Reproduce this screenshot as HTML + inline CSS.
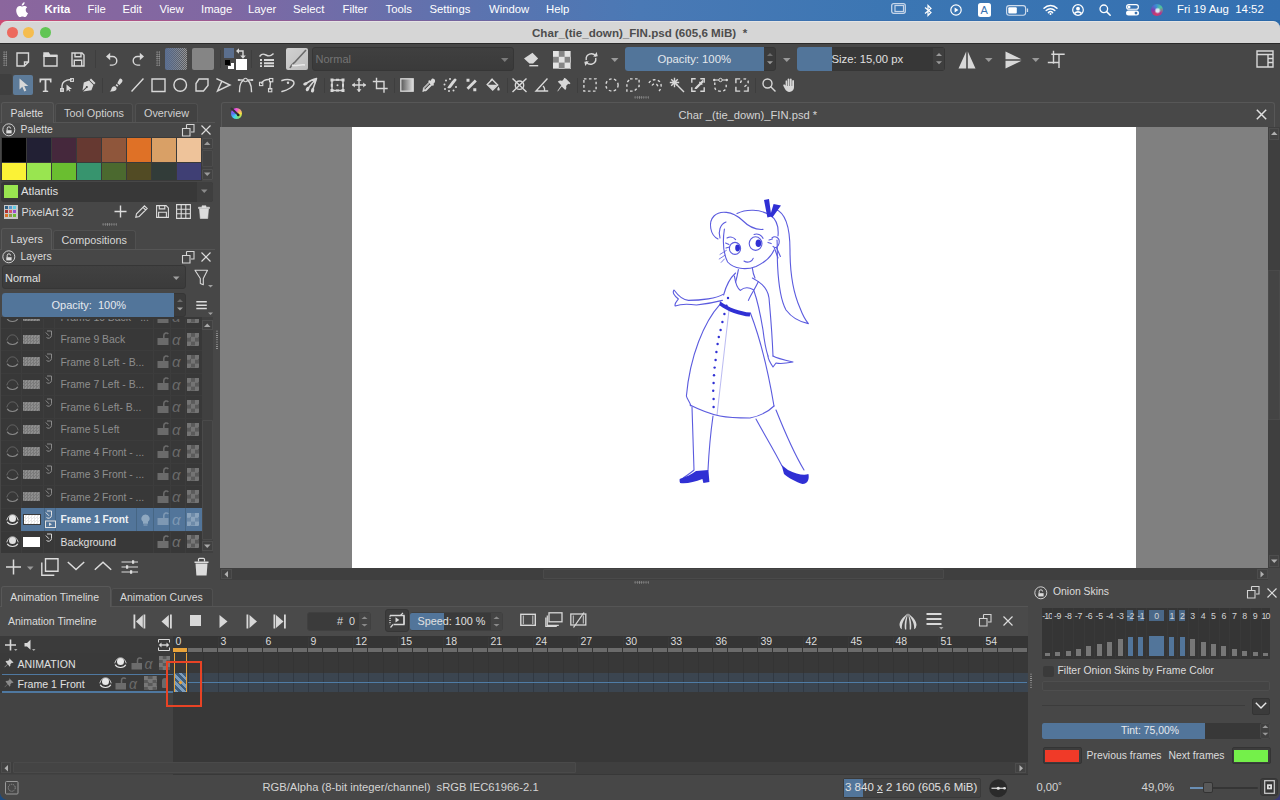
<!DOCTYPE html>
<html><head><meta charset="utf-8">
<style>
*{margin:0;padding:0;box-sizing:border-box}
html,body{width:1280px;height:800px;overflow:hidden;background:#474747;font-family:"Liberation Sans",sans-serif;color:#e6e6e6}
.a{position:absolute}
svg.i{position:absolute;overflow:visible}
.t{position:absolute;white-space:nowrap;font-size:11px;line-height:1}
.ic{fill:none;stroke:#d8d8d8;stroke-width:1.4;stroke-linecap:square}
.fi{fill:#d8d8d8;stroke:none}
.dots{position:absolute;background-image:radial-gradient(circle,#9c9c9c 0.65px,transparent 0.85px);background-size:2.2px 2.2px}
.sep{position:absolute;width:1px;background:#3e3e3e}
</style></head><body>
<!-- MENU BAR -->
<div class="a" style="left:0;top:0;width:1280px;height:20px;background:linear-gradient(90deg,#8b669d 0%,#7f68a3 18%,#5f72ae 35%,#4a79b5 50%,#3b76b3 70%,#3470b1 100%)"></div>
<div class="a" style="left:0;top:20px;width:1280px;height:10px;background:linear-gradient(90deg,#cc4a72,#a05a90 15%,#3d72b0 60%,#2a68a8)"></div>
<svg class="i" style="left:16px;top:2px" width="12" height="15" viewBox="0 0 12 15"><path fill="#fff" d="M9.7 7.9c0-1.7 1.4-2.5 1.5-2.6-.8-1.2-2.1-1.3-2.5-1.4-1-.1-2.1.6-2.6.6-.6 0-1.4-.6-2.3-.6C2.6 4 1.4 4.7.8 5.9c-1.3 2.2-.3 5.5.9 7.3.6.9 1.3 1.8 2.3 1.8.9 0 1.3-.6 2.4-.6s1.4.6 2.4.6 1.6-.9 2.2-1.8c.7-1 1-2 1-2.1-.1 0-2.3-.8-2.3-3.2zM7.9 2.6c.5-.6.8-1.4.7-2.3-.7 0-1.6.5-2.1 1.1-.5.5-.9 1.4-.8 2.2.8.1 1.7-.4 2.2-1z"/></svg>
<div class="t" style="left:44.5px;top:4px;font-size:11.3px;font-weight:bold;color:#fff">Krita</div>
<div class="t" style="left:87.5px;top:4px;font-size:11.3px;color:#fff">File</div>
<div class="t" style="left:122.5px;top:4px;font-size:11.3px;color:#fff">Edit</div>
<div class="t" style="left:159.5px;top:4px;font-size:11.3px;color:#fff">View</div>
<div class="t" style="left:201px;top:4px;font-size:11.3px;color:#fff">Image</div>
<div class="t" style="left:248px;top:4px;font-size:11.3px;color:#fff">Layer</div>
<div class="t" style="left:293px;top:4px;font-size:11.3px;color:#fff">Select</div>
<div class="t" style="left:342.5px;top:4px;font-size:11.3px;color:#fff">Filter</div>
<div class="t" style="left:385.5px;top:4px;font-size:11.3px;color:#fff">Tools</div>
<div class="t" style="left:429.5px;top:4px;font-size:11.3px;color:#fff">Settings</div>
<div class="t" style="left:489px;top:4px;font-size:11.3px;color:#fff">Window</div>
<div class="t" style="left:546px;top:4px;font-size:11.3px;color:#fff">Help</div>
<div class="t" style="left:1177px;top:4px;font-size:11.4px;color:#fff">Fri 19 Aug&nbsp;&nbsp;14:52</div>
<!-- status icons -->
<svg class="i" style="left:891px;top:3px" width="15" height="11"><rect x="0.7" y="0.7" width="13.6" height="9.6" rx="2" fill="none" stroke="#e8eef6" stroke-width="1.3" opacity=".8"/><rect x="4" y="2.5" width="8.5" height="6" fill="none" stroke="#e8eef6" stroke-width="1.2" opacity=".8"/></svg>
<svg class="i" style="left:924px;top:4px" width="8" height="13"><path d="M1 3.5l6 5-3 3V1.5l3 3-6 5" fill="none" stroke="#fff" stroke-width="1.2"/></svg>
<svg class="i" style="left:949.5px;top:4px" width="12" height="12"><circle cx="6" cy="6" r="5.2" fill="none" stroke="#fff" stroke-width="1.2"/><path d="M4.6 3.6v4.8l3.8-2.4z" fill="#fff"/></svg>
<div class="a" style="left:977.5px;top:3px;width:13.5px;height:14px;background:#fff;border-radius:2.5px"></div>
<div class="t" style="left:980.5px;top:5px;font-size:11px;color:#3a72b0">A</div>
<svg class="i" style="left:1006px;top:5px" width="23" height="11"><rect x="0.6" y="0.6" width="19" height="9.6" rx="2.5" fill="none" stroke="#cfdcec" stroke-width="1.1"/><rect x="2.3" y="2.3" width="8.5" height="6.2" rx="1" fill="#fff"/><rect x="20.8" y="3.5" width="1.3" height="3.5" fill="#cfdcec"/></svg>
<svg class="i" style="left:1043px;top:4px" width="15" height="11"><path d="M1 4.2a9 9 0 0 1 13 0M3.2 6.5a6 6 0 0 1 8.6 0M5.4 8.6a3 3 0 0 1 4.2 0" fill="none" stroke="#fff" stroke-width="1.5" stroke-linecap="round"/><circle cx="7.5" cy="10" r="1" fill="#fff"/></svg>
<svg class="i" style="left:1072px;top:4px" width="12" height="12"><circle cx="6" cy="6" r="5.3" fill="none" stroke="#fff" stroke-width="1.2"/><circle cx="6" cy="4.7" r="1.9" fill="#fff"/><path d="M2.6 9.4c1.8-2 5-2 6.8 0" fill="none" stroke="#fff" stroke-width="1.6"/></svg>
<svg class="i" style="left:1099px;top:4px" width="12" height="12"><circle cx="4.8" cy="4.8" r="3.8" fill="none" stroke="#fff" stroke-width="1.3"/><path d="M7.6 7.6l3.6 3.6" stroke="#fff" stroke-width="1.5" stroke-linecap="round"/></svg>
<svg class="i" style="left:1125.5px;top:4px" width="13" height="12"><rect x="0.6" y="0.6" width="11.8" height="4.6" rx="2.3" fill="none" stroke="#fff" stroke-width="1.1"/><circle cx="3" cy="2.9" r="1.5" fill="#fff"/><rect x="0" y="6.6" width="13" height="5" rx="2.5" fill="#fff"/><circle cx="10" cy="9.1" r="1.4" fill="#3a72b0"/></svg>
<div class="a" style="left:1151px;top:4px;width:12px;height:12px;border-radius:50%;background:radial-gradient(circle at 55% 55%,#d8e6f5 0 15%,transparent 35%),conic-gradient(from 200deg,#d03a6a,#7a3fb0,#3b8ad8,#4fc79a,#b03a8a,#d03a6a)"></div>

<!-- TITLE BAR -->
<div class="a" style="left:0;top:21px;width:1280px;height:23px;background:#d6d6d6;border-radius:7px 7px 0 0;border-top:1px solid #e4e4e4;border-bottom:1px solid #2a2a2a"></div>
<div class="a" style="left:6.5px;top:27px;width:11px;height:11px;border-radius:50%;background:#ed6a5e"></div>
<div class="a" style="left:23px;top:27px;width:11px;height:11px;border-radius:50%;background:#f5bd4f"></div>
<div class="a" style="left:39.5px;top:27px;width:11px;height:11px;border-radius:50%;background:#61c554"></div>
<div class="t" style="left:532px;top:26.5px;font-size:11.6px;font-weight:bold;color:#4d4d4d">Char_(tie_down)_FIN.psd (605,6 MiB)&nbsp;&nbsp;*</div>
<!-- TOOLBAR -->
<div class="a" style="left:0;top:44px;width:1280px;height:54px;background:#474747"></div>
<div class="dots" style="left:3px;top:51px;width:4.4px;height:15.4px"></div>
<svg class="i" style="left:16px;top:52px" width="14" height="15"><path class="ic" d="M1 1h11.5v9L8.5 14H1z M12.5 10H8.5v4"/></svg>
<svg class="i" style="left:43px;top:52px" width="15" height="15"><path class="ic" d="M1 3.5h13V14H1z"/><path class="fi" d="M0.3 0.3h5.5l1.5 2.5h6.9v2.2H0.3z"/></svg>
<svg class="i" style="left:71px;top:52px" width="14" height="15"><path class="ic" d="M1 1h10l2 2v11H1z M3.3 14V8.2h7.4V14 M4 1v3.8h6V1"/></svg>
<div class="sep" style="left:95px;top:50px;height:18px"></div>
<svg class="i" style="left:106px;top:52px" width="12" height="15"><path class="ic" d="M3 4.5h3.5a4.3 4.3 0 0 1 0 8.6H4.5" stroke-width="1.5" stroke-linecap="butt"/><path class="fi" d="M0 4.5L4.2 0.8v7.4z"/></svg>
<svg class="i" style="left:132px;top:52px" width="12" height="15"><path class="ic" d="M9 4.5H5.5a4.3 4.3 0 0 0 0 8.6h2" stroke-width="1.5" stroke-linecap="butt"/><path class="fi" d="M12 4.5L7.8 0.8v7.4z"/></svg>
<div class="dots" style="left:156px;top:51px;width:4.4px;height:15.4px"></div>
<div class="a" style="left:165px;top:48px;width:22px;height:22px;border-radius:2px;background:linear-gradient(90deg,rgba(90,110,145,1),rgba(90,110,145,0)),repeating-conic-gradient(#9a9a9a 0 25%,#5a5a5a 0 50%) 0 0/2px 2px"></div>
<div class="a" style="left:192px;top:48px;width:22px;height:22px;border-radius:2px;background:#858585"></div>
<div class="sep" style="left:220px;top:50px;height:18px"></div>
<div class="a" style="left:224px;top:48px;width:10px;height:10px;background:#5b6f8e"></div>
<svg class="i" style="left:236px;top:48px" width="11" height="11"><path class="ic" d="M2.5 3h4.5v4.5" stroke-width="1.3" stroke-linecap="butt"/><path class="fi" d="M0 3l3-2.8v5.6z M7 10.8L4.2 7.5h5.6z"/></svg>
<div class="a" style="left:228px;top:63px;width:6px;height:6px;background:#fff"></div>
<div class="a" style="left:224px;top:59px;width:7px;height:7px;background:#000;border:1px solid #474747"></div>
<div class="a" style="left:236px;top:59px;width:11px;height:11px;background:#fff"></div>
<div class="sep" style="left:251px;top:50px;height:18px"></div>
<svg class="i" style="left:259px;top:51px" width="16" height="16"><path class="ic" d="M1 5c2-3 4-2 6-1s4 2 7-1" stroke-width="1.7" stroke-linecap="round"/><path class="fi" d="M1 8h2v2H1z M5 8h10v2H5z M1 11.3h2v2H1z M5 11.3h10v2H5z M1 14.3h2v1.7H1z M5 14.3h10v1.7H5z"/></svg>
<div class="a" style="left:286px;top:48px;width:22px;height:22px;border-radius:2px;background:linear-gradient(135deg,#d2d2d2,#bcbcbc)"></div>
<svg class="i" style="left:286px;top:48px" width="22" height="22"><path d="M20 2L9 14c-2 2-4 3-5 6" fill="none" stroke="#6a6a6a" stroke-width="1.6"/><path d="M6 17c4 2 8-1 13 0" fill="none" stroke="#e8e8e8" stroke-width="1.5"/></svg>
<div class="a" style="left:312px;top:47px;width:202px;height:24px;border-radius:3px;background:linear-gradient(#404040,#3a3a3a);border:1px solid #363636"></div>
<div class="t" style="left:315.5px;top:54px;font-size:11px;color:#747474">Normal</div>
<svg class="i" style="left:501px;top:58px" width="8" height="5"><path d="M0 0h7.5L3.75 4z" fill="#7a7a7a"/></svg>
<svg class="i" style="left:523px;top:52px" width="16" height="15"><path class="fi" d="M9.5 0.8l5.6 5.6-5 5H6.4L1 6.4z"/><path class="ic" d="M7 13.7h7.5" stroke-width="1.2" stroke-linecap="butt"/></svg>
<div class="a" style="left:553px;top:51px;width:17.5px;height:17.5px;background:repeating-conic-gradient(#868686 0 25%,#e4e4e4 0 50%) 0 0/11.6px 11.6px"></div>
<svg class="i" style="left:583px;top:51px" width="16" height="16"><path class="ic" d="M3.2 8.5A5.2 5.2 0 0 1 12.5 4.8 M12.8 7.5A5.2 5.2 0 0 1 3.5 11.2" stroke-width="1.5" stroke-linecap="butt"/><path class="fi" d="M10.2 5.8l4.5-0.5-1-4.3z M5.8 10.2l-4.5 0.5 1 4.3z"/></svg>
<svg class="i" style="left:611px;top:58px" width="8" height="5"><path d="M0 0h7.5L3.75 4z" fill="#9a9a9a"/></svg>
<div class="a" style="left:625px;top:47px;width:151px;height:24px;border-radius:3px;background:#3b3b3b;border:1px solid #363636"></div>
<div class="a" style="left:625px;top:47px;width:139px;height:24px;border-radius:3px 0 0 3px;background:#52759a"></div>
<div class="t" style="left:657.5px;top:54px;font-size:11.3px;color:#e4e8ec">Opacity: 100%</div>
<svg class="i" style="left:767px;top:52px" width="7" height="14"><path d="M0 4h6L3 1z" fill="#6e6e6e"/><path d="M0 9.3h6L3 12.3z" fill="#9a9a9a"/></svg>
<svg class="i" style="left:783px;top:58px" width="8" height="5"><path d="M0 0h7.5L3.75 4z" fill="#9a9a9a"/></svg>
<div class="a" style="left:797px;top:47px;width:148px;height:24px;border-radius:3px;background:#373737;border:1px solid #363636"></div>
<div class="a" style="left:797px;top:47px;width:35px;height:24px;border-radius:3px 0 0 3px;background:#52759a"></div>
<div class="a" style="left:933px;top:48px;width:11px;height:22px;background:#3f3f3f"></div>
<div class="t" style="left:831.5px;top:54px;font-size:11.3px;color:#e0e0e0">Size: 15,00 px</div>
<svg class="i" style="left:936px;top:52px" width="7" height="14"><path d="M0 4h6L3 1z" fill="#9a9a9a"/><path d="M0 9.3h6L3 12.3z" fill="#9a9a9a"/></svg>
<svg class="i" style="left:958px;top:51px" width="18" height="18"><path class="fi" d="M8.2 0.5v17H0.5z M9.8 0.5v17h7.7z"/></svg>
<svg class="i" style="left:985px;top:58px" width="8" height="5"><path d="M0 0h7.5L3.75 4z" fill="#9a9a9a"/></svg>
<svg class="i" style="left:1005px;top:51px" width="17" height="18"><path class="fi" d="M0.5 0.5l16 7.7H0.5z M0.5 9.8h16l-16 7.7z"/></svg>
<svg class="i" style="left:1032px;top:58px" width="8" height="5"><path d="M0 0h7.5L3.75 4z" fill="#9a9a9a"/></svg>
<svg class="i" style="left:1048px;top:51px" width="17" height="17"><path class="ic" d="M5.5 0.5v11.5M0.5 11.5h10M4 3.3h12M11 3.3v13" stroke-width="1.5" stroke-linecap="butt"/></svg>
<svg class="i" style="left:1256px;top:50px" width="18" height="18"><path class="ic" d="M1 1h16v16H1z M1 4.5h16 M12 4.5v12.5 M12 8.5h5 M12 12.5h5" stroke-width="1.1" stroke-linecap="butt"/></svg>

<!-- ROW 2 tools -->
<div class="a" style="left:0;top:74px;width:12px;height:21px;background:#3f3f3f;border-radius:0 2px 2px 0"></div>
<div class="a" style="left:13px;top:75px;width:20px;height:20px;background:#5d7b99;border-radius:2px"></div>
<svg class="i" style="left:19px;top:78px" width="10" height="14"><path class="fi" d="M0.5 0.5v11l2.8-2.8 2 4.8 2-0.9-2-4.6h4z"/></svg>
<svg class="i" style="left:39px;top:78px" width="13" height="14"><path class="fi" d="M0.5 0.5h12v4h-1.3l-0.6-2.3H7.4v10.2l1.8.4v1.2H3.8v-1.2l1.8-.4V2.2H2.4L1.8 4.5H0.5z"/></svg>
<svg class="i" style="left:60px;top:78px" width="14" height="14"><path class="ic" d="M2 12.5V8c0-4 3-6 9-6.5" stroke-width="1.3"/><rect x="0.6" y="10.6" width="2.8" height="2.8" fill="none" stroke="#d8d8d8" stroke-width="1.1"/><rect x="10.6" y="0.6" width="2.8" height="2.8" fill="none" stroke="#d8d8d8" stroke-width="1.1"/><path class="fi" d="M6.5 6.5v7l1.8-1.8 1.2 1.8 1-0.6-1.2-1.8h2.7z"/></svg>
<svg class="i" style="left:82px;top:78px" width="14" height="14"><path class="fi" d="M9 0.5l4.5 4.5-1.4 1.4L7.6 1.9z M7 2.6l4.4 4.4-2 5.2L1 13.5l3.6-3.6a1 1 0 1 0-.7-.7L0.5 12.6 1.8 4.6z"/></svg>
<div class="sep" style="left:102px;top:78px;height:15px"></div>
<svg class="i" style="left:109px;top:78px" width="14" height="14"><path class="fi" d="M11.2 0.5c1.2 0 2.3 1 2.3 2.3 0 1-1 2-3 4.2L8.3 5.2C10 2 10.5 0.5 11.2 0.5z M7.6 6l1.8 1.6-1 1.2-1.8-1.6z M5.3 8.3c1.2-.1 2.3 1 2.3 2.3 0 2-2.6 3.2-6.9 2.9 2-1 1.4-2.8 2.5-4.2.5-.6 1.3-1 2.1-1z"/></svg>
<svg class="i" style="left:131px;top:78px" width="13" height="14"><path class="ic" d="M1 13L12 1" stroke-width="1.6"/></svg>
<svg class="i" style="left:151px;top:78px" width="15" height="14"><path class="ic" d="M1 1h13v12.5H1z" stroke-width="1.6"/></svg>
<svg class="i" style="left:173px;top:78px" width="15" height="14"><ellipse cx="7.2" cy="7" rx="6.3" ry="6.3" class="ic" stroke-width="1.6"/></svg>
<svg class="i" style="left:195px;top:78px" width="14" height="14"><path class="ic" d="M4 1h9v6.5L8.5 13H1V5.5z" stroke-width="1.6"/></svg>
<svg class="i" style="left:216px;top:78px" width="15" height="14"><path class="ic" d="M1 1l13 6-12.5 6L5.5 4" stroke-width="1.6" stroke-linecap="round"/></svg>
<svg class="i" style="left:238px;top:78px" width="15" height="14"><path class="ic" d="M1.5 13.5c0-9 2.5-11.5 6-11.5s6 2.5 6 11.5" stroke-width="1.6"/><path class="ic" d="M0.5 2h14" stroke-width="1.2"/><circle cx="7.5" cy="2" r="1.8" fill="#474747" stroke="#d8d8d8" stroke-width="1.1"/><circle cx="1" cy="2" r="1" class="fi"/><circle cx="14" cy="2" r="1" class="fi"/></svg>
<svg class="i" style="left:259px;top:78px" width="15" height="14"><path class="ic" d="M2.5 5c2-3 5-3.5 7-3.5M11.5 3.8C11 8 11 10 11 11" stroke-width="1.6"/><rect x="0.5" y="4.3" width="3.3" height="3.3" fill="none" stroke="#d8d8d8" stroke-width="1.1"/><rect x="10.5" y="0.5" width="3.3" height="3.3" fill="none" stroke="#d8d8d8" stroke-width="1.1"/><rect x="9.5" y="10.5" width="3.3" height="3.3" fill="none" stroke="#d8d8d8" stroke-width="1.1"/></svg>
<svg class="i" style="left:281px;top:78px" width="14" height="14"><path class="ic" d="M1 2.5c4-1.5 12-1.5 12 2.5 0 3.5-6 7-12 8.5" stroke-width="1.6" stroke-linecap="round"/><circle cx="7" cy="4.8" r="1.2" class="fi"/></svg>
<svg class="i" style="left:303px;top:78px" width="15" height="15"><path d="M13.5 0.5C10 1.5 6 3 3 5.5 M13.5 0.5C11 3 8 6.5 5 10.5 M13.5 0.5C12.5 4 11 8 9.8 11.5" fill="none" stroke="#d8d8d8" stroke-width="1.5" stroke-linecap="round"/><ellipse cx="2.4" cy="5.8" rx="2.3" ry="1.5" transform="rotate(-25 2.4 5.8)" fill="#d8d8d8"/><ellipse cx="4.6" cy="11" rx="1.6" ry="2.3" transform="rotate(35 4.6 11)" fill="#d8d8d8"/><ellipse cx="9.6" cy="12.3" rx="1.6" ry="2.3" transform="rotate(15 9.6 12.3)" fill="#d8d8d8"/><path d="M13.8 0.2L8.5 1.8 12.3 5.5z" fill="#d8d8d8"/></svg>
<div class="sep" style="left:324px;top:78px;height:15px"></div>
<svg class="i" style="left:330px;top:78px" width="15" height="14"><path class="ic" d="M2 2h11v10.5H2z" stroke-width="1.5"/><path class="fi" d="M0.5 0.5h3v3h-3z M11.5 0.5h3v3h-3z M0.5 11h3v3h-3z M11.5 11h3v3h-3z M6 0.8h3v2H6z M6 11.5h3v2H6z M0.8 5.8h2v3h-2z M12 5.8h2v3h-2z"/><circle cx="7.5" cy="7.2" r="1" class="fi"/></svg>
<svg class="i" style="left:352px;top:78px" width="14" height="14"><path class="ic" d="M7 1v12 M1 7h12" stroke-width="1.5"/><path class="fi" d="M7 0l2.5 2.8h-5z M7 14l2.5-2.8h-5z M0 7l2.8-2.5v5z M14 7l-2.8-2.5v5z"/></svg>
<svg class="i" style="left:373px;top:78px" width="15" height="14"><path class="ic" d="M3.5 0.5v10h10.5 M0.5 3.5h10.5v10.5" stroke-width="1.6" stroke-linecap="butt"/></svg>
<div class="sep" style="left:394px;top:78px;height:15px"></div>
<svg class="i" style="left:400px;top:78px" width="14" height="14"><defs><linearGradient id="gr1"><stop offset="0" stop-color="#555"/><stop offset="1" stop-color="#e0e0e0"/></linearGradient></defs><rect x="0.8" y="0.8" width="12.4" height="12.4" fill="url(#gr1)" stroke="#d8d8d8" stroke-width="1.3"/></svg>
<svg class="i" style="left:422px;top:78px" width="14" height="14"><path class="fi" d="M10.5 0.5a2.6 2.6 0 0 1 2.6 2.6c0 .7-.3 1.4-.8 1.9l-1 1 .8.8-1.2 1.2-.8-.8-5.5 5.5c-.6.6-1.6.8-2.4.5L1 14 0.2 13.2l.7-1.2c-.3-.8-.1-1.8.5-2.4l5.5-5.5-.8-.8L7.3 2.1l.8.8 1-1c.4-.9 1.4-1.4 1.4-1.4z"/><path d="M7 5l-5 5c-.4.4-.4 1.2 0 1.6s1.2.4 1.6 0l5-5" fill="#474747"/><path d="M7 5.5l-4.7 4.7c-.3.3-.3.9 0 1.2s.9.3 1.2 0L8.2 6.7" fill="none" stroke="#d8d8d8" stroke-width="1"/></svg>
<svg class="i" style="left:443px;top:78px" width="14" height="14"><path class="fi" d="M12 0.5c1 0 1.7.8 1.5 1.8L8 9.5c-1 1-2.6 1.2-3.7.3C5.2 8.5 8.3 3.8 11 1c.3-.3.6-.5 1-.5z"/><circle cx="1.5" cy="6.5" r="1" class="fi"/><circle cx="3" cy="2.5" r="1" class="fi"/><circle cx="7" cy="1" r="1" class="fi"/><circle cx="2" cy="11" r="1" class="fi"/><circle cx="6" cy="13" r="1" class="fi"/><circle cx="10.5" cy="12.5" r="1" class="fi"/><circle cx="13" cy="9" r="1" class="fi"/></svg>
<svg class="i" style="left:465px;top:78px" width="13" height="14"><path class="fi" d="M9.8 1.5l2 2L3.5 11.8l-2-2z M1.5 0.8h3v3h-3z M8.3 10.3h3v3h-3z"/></svg>
<svg class="i" style="left:486px;top:78px" width="14" height="14"><path class="ic" d="M1.2 6.5L6.2 1.5l5.5 5.5-5 5z" stroke-width="1.4"/><path class="fi" d="M1.5 6.8h10L6.8 11.6z M6 0.3l1 1-2 2-1-1z"/><path class="fi" d="M12.5 8.5c.8 1.3 1.2 2.2 1.2 2.9a1.2 1.2 0 0 1-2.4 0c0-.7.4-1.6 1.2-2.9z"/></svg>
<div class="sep" style="left:507px;top:78px;height:15px"></div>
<svg class="i" style="left:512px;top:78px" width="15" height="14"><path class="ic" d="M1 1l13 12.5 M14 1L1 13.5" stroke-width="1.5"/><circle cx="7.5" cy="7.2" r="4.2" class="ic" stroke-width="1.1"/></svg>
<svg class="i" style="left:535px;top:78px" width="13" height="14"><path class="ic" d="M12 1L1 13h11.5 M8.5 8.5c1 1 1.3 2.5 1.1 4.3" stroke-width="1.5"/></svg>
<svg class="i" style="left:557px;top:78px" width="14" height="14"><path class="fi" d="M8.8 0.5l4.7 4.7-1.2 1-1.1-.4-2.1 2.1c.6 1.6.2 3-.9 4.1L4.7 8.5l-3.9 4.9-.4-.3L4.3 7.3 0.8 3.8C1.9 2.7 3.4 2.3 5 2.9l2.1-2.1-.4-1.1z"/></svg>
<div class="sep" style="left:577px;top:78px;height:15px"></div>
<svg class="i" style="left:583px;top:78px" width="14" height="14"><path class="ic" d="M0.9 0.9h12.2v12.2H0.9z" stroke-width="1.7" stroke-dasharray="2.6 2.4" style="stroke-linecap:butt"/></svg>
<svg class="i" style="left:605px;top:78px" width="14" height="14"><circle cx="7" cy="7" r="6.1" class="ic" stroke-width="1.7" stroke-dasharray="2.6 2.4" style="stroke-linecap:butt"/></svg>
<svg class="i" style="left:626px;top:78px" width="14" height="14"><path class="ic" d="M4 0.9h9.1v7.5L8.2 13.1H0.9V4.5z" stroke-width="1.7" stroke-dasharray="2.6 2.4" style="stroke-linecap:butt"/></svg>
<svg class="i" style="left:648px;top:78px" width="14" height="14"><path class="ic" d="M1 5C2.5 1.5 8.5 0.5 11.5 3.5C14 6 13.5 10.5 11 13 M4 7.5C5.5 5 9 5 10 8.5" stroke-width="1.6" stroke-dasharray="2.6 2.4" style="stroke-linecap:butt"/></svg>
<svg class="i" style="left:670px;top:78px" width="14" height="14"><path class="ic" d="M6.5 6.5L13.5 13.5" stroke-width="1.5"/><path class="ic" d="M4.5 0.5v8 M0.5 4.5h8 M1.7 1.7l5.6 5.6 M7.3 1.7L1.7 7.3" stroke-width="1.1"/></svg>
<svg class="i" style="left:691px;top:78px" width="14" height="14"><path class="ic" d="M0.8 4V0.8H4 M10 0.8h3.2V4 M13.2 10v3.2H10 M4 13.2H0.8V10" stroke-width="1.5" stroke-linecap="butt"/><path class="fi" d="M10.5 1.5a2 2 0 0 1 2 2c0 .5-.2 1-.6 1.3l-.8.8.6.6-.9.9-.6-.6-4.5 4.5L3.5 11l.5-1.6 4.5-4.5-.6-.6.9-.9.6.6.8-.8c.3-.4.8-.6 1.3-.6z"/></svg>
<svg class="i" style="left:713px;top:78px" width="15" height="14"><path class="ic" d="M1.8 4.5V9C1.8 12 4.5 13.2 7.5 13.2S13.2 12 13.2 9V4.5" stroke-width="1.6" stroke-dasharray="2.6 2.4" style="stroke-linecap:butt"/><path d="M1 2h13" stroke="#d8d8d8" stroke-width="1.1"/><circle cx="7.5" cy="2" r="1.7" fill="#474747" stroke="#d8d8d8" stroke-width="1"/><circle cx="1.2" cy="2" r="1.2" fill="#d8d8d8"/><circle cx="13.8" cy="2" r="1.2" fill="#d8d8d8"/></svg>
<svg class="i" style="left:735px;top:78px" width="14" height="14"><path class="ic" d="M0.9 4.5V0.9H4.5 M0.9 9.5v3.6h3.6 M9.5 13.1h3.6V9.5" stroke-width="1.6" stroke-linecap="butt"/><path class="ic" d="M5.5 5C6 2 8 0.9 10 0.9s3.2 1.5 3.2 3.2C13.2 6.5 10 8 8 10" stroke-width="1.6" stroke-dasharray="2.6 2.4" style="stroke-linecap:butt"/></svg>
<div class="sep" style="left:755px;top:78px;height:15px"></div>
<svg class="i" style="left:762px;top:78px" width="14" height="14"><circle cx="5.5" cy="5.5" r="4.5" class="ic" stroke-width="1.7"/><path class="ic" d="M9 9l4 4" stroke-width="2.2"/></svg>
<svg class="i" style="left:783px;top:78px" width="13" height="14"><path class="fi" d="M3.2 2.2c.5 0 .9.4.9.9v5h.5V1.3c0-.5.4-.9.9-.9s.9.4.9.9v6.8h.5V1.5c0-.5.4-.9.9-.9s.9.4.9.9v6.6h.5V3c0-.5.4-.9.9-.9s.9.4.9.9v6c0 2.8-1.8 4.9-4.7 4.9H6.3C4.5 13.9 3 12.8 2 11L0.3 7.7c-.2-.5 0-1 .4-1.2.5-.2 1-.1 1.3.3l.6.9V3.1c0-.5.4-.9.9-.9z"/></svg>
<div class="dots" style="left:634px;top:96px;width:15px;height:3px"></div>
<!-- LEFT DOCK -->
<div class="a" style="left:0;top:122px;width:215px;height:1px;background:#555"></div>
<div class="a" style="left:1px;top:102px;width:53px;height:21px;background:#4a4a4a;border:1px solid #585858;border-bottom:none;border-radius:3px 3px 0 0"></div>
<div class="a" style="left:55px;top:103px;width:78px;height:19px;background:#424242;border:1px solid #505050;border-bottom:none;border-radius:3px 3px 0 0"></div>
<div class="a" style="left:135px;top:103px;width:63px;height:19px;background:#424242;border:1px solid #505050;border-bottom:none;border-radius:3px 3px 0 0"></div>
<div class="t" style="left:10.5px;top:107.5px;font-size:10.5px;color:#dcdcdc">Palette</div>
<div class="t" style="left:64px;top:108px;font-size:10.8px;color:#d0d0d0">Tool Options</div>
<div class="t" style="left:144px;top:108px;font-size:10.8px;color:#d0d0d0">Overview</div>
<svg class="i" style="left:2px;top:123px" width="14" height="14"><circle cx="6.8" cy="6.8" r="6" fill="none" stroke="#cfcfcf" stroke-width="1"/><path d="M4.3 7.2h5.3v3.2H4.3z" fill="#dcdcdc"/><path d="M5.2 7.2V5.5a1.7 1.7 0 0 1 3.4 0" fill="none" stroke="#dcdcdc" stroke-width="1"/></svg>
<div class="t" style="left:20.5px;top:125.3px;font-size:10.4px;color:#dcdcdc">Palette</div>
<svg class="i" style="left:182px;top:124px" width="13" height="13"><path d="M4.5 0.5h7.5v7.5H9 M0.5 4.5h7.5V12H0.5z M4.5 4.5V0.5" fill="none" stroke="#d4d4d4" stroke-width="1.1"/></svg>
<svg class="i" style="left:201px;top:125px" width="10" height="10"><path d="M0.5 0.5l9 9M9.5 0.5l-9 9" stroke="#dcdcdc" stroke-width="1.2"/></svg>
<div class="a" style="left:1px;top:137px;width:201px;height:44px;background:#3a3a3a"></div>
<div class="a" style="left:1.75px;top:138px;width:24px;height:24px;background:#000000"></div>
<div class="a" style="left:26.75px;top:138px;width:24px;height:24px;background:#222034"></div>
<div class="a" style="left:51.75px;top:138px;width:24px;height:24px;background:#45283c"></div>
<div class="a" style="left:76.75px;top:138px;width:24px;height:24px;background:#663931"></div>
<div class="a" style="left:101.75px;top:138px;width:24px;height:24px;background:#8f563b"></div>
<div class="a" style="left:126.75px;top:138px;width:24px;height:24px;background:#df7126"></div>
<div class="a" style="left:151.75px;top:138px;width:24px;height:24px;background:#d9a066"></div>
<div class="a" style="left:176.75px;top:138px;width:24px;height:24px;background:#eec39a"></div>
<div class="a" style="left:1.75px;top:163px;width:24px;height:17px;background:#fbf236"></div>
<div class="a" style="left:26.75px;top:163px;width:24px;height:17px;background:#99e550"></div>
<div class="a" style="left:51.75px;top:163px;width:24px;height:17px;background:#6abe30"></div>
<div class="a" style="left:76.75px;top:163px;width:24px;height:17px;background:#37946e"></div>
<div class="a" style="left:101.75px;top:163px;width:24px;height:17px;background:#4b692f"></div>
<div class="a" style="left:126.75px;top:163px;width:24px;height:17px;background:#524b24"></div>
<div class="a" style="left:151.75px;top:163px;width:24px;height:17px;background:#323c39"></div>
<div class="a" style="left:176.75px;top:163px;width:24px;height:17px;background:#3f3f74"></div>
<div class="a" style="left:202px;top:138px;width:11px;height:42px;background:#424242"></div>
<div class="a" style="left:202px;top:138px;width:11px;height:10.5px;border:1px solid #505050;border-radius:1px"></div>
<div class="a" style="left:202px;top:150px;width:11px;height:17px;border:1px solid #4c4c4c;border-radius:1px"></div>
<div class="a" style="left:202px;top:169px;width:11px;height:10.5px;border:1px solid #505050;border-radius:1px"></div>
<svg class="i" style="left:204px;top:141px" width="8" height="5"><path d="M0 4h6.5L3.25 0.5z" fill="#9a9a9a"/></svg>
<svg class="i" style="left:204px;top:172px" width="8" height="5"><path d="M0 0.5h6.5L3.25 4z" fill="#9a9a9a"/></svg>
<div class="a" style="left:1px;top:182px;width:212px;height:19.5px;background:#383838;border-radius:3px"></div>
<div class="a" style="left:197px;top:182px;width:16px;height:19.5px;background:#3f3f3f;border-radius:0 3px 3px 0"></div>
<div class="a" style="left:4px;top:185px;width:13.5px;height:13px;background:#99e550"></div>
<div class="t" style="left:21px;top:186.3px;font-size:11.3px;color:#e0e0e0">Atlantis</div>
<svg class="i" style="left:201px;top:189px" width="8" height="5"><path d="M0 0.5h6.5L3.25 4z" fill="#8a8a8a"/></svg>
<div class="a" style="left:4px;top:205px;width:13.5px;height:13.5px;background:#c8c8c8"></div>
<div class="a" style="left:5px;top:206px;width:3.3px;height:3.3px;background:#306082"></div>
<div class="a" style="left:9px;top:206px;width:3.3px;height:3.3px;background:#5b9bd0"></div>
<div class="a" style="left:13px;top:206px;width:3.3px;height:3.3px;background:#5fcde4"></div>
<div class="a" style="left:5px;top:210px;width:3.3px;height:3.3px;background:#ac3232"></div>
<div class="a" style="left:9px;top:210px;width:3.3px;height:3.3px;background:#d95763"></div>
<div class="a" style="left:13px;top:210px;width:3.3px;height:3.3px;background:#9b4ad0"></div>
<div class="a" style="left:5px;top:214px;width:3.3px;height:3.3px;background:#df7126"></div>
<div class="a" style="left:9px;top:214px;width:3.3px;height:3.3px;background:#8f974a"></div>
<div class="a" style="left:13px;top:214px;width:3.3px;height:3.3px;background:#6abe30"></div>
<div class="t" style="left:21.5px;top:206.5px;font-size:10.8px;color:#dcdcdc">PixelArt 32</div>
<svg class="i" style="left:114px;top:205px" width="13" height="13"><path d="M6.5 0.5v12M0.5 6.5h12" stroke="#dcdcdc" stroke-width="1.4"/></svg>
<svg class="i" style="left:135px;top:205px" width="13" height="13"><path d="M9.5 0.8l2.7 2.7-8 8L0.8 12.2l.7-3.4z M8 2.3l2.7 2.7" fill="none" stroke="#dcdcdc" stroke-width="1.1"/></svg>
<svg class="i" style="left:156px;top:205px" width="13" height="13"><path d="M0.6 0.6h9.5l2.3 2.3v9.5H0.6z M2.6 12.4V7.3h7.8v5.1 M3.3 0.6v3.3h5.5V0.6" fill="none" stroke="#dcdcdc" stroke-width="1.1"/></svg>
<svg class="i" style="left:176px;top:204px" width="15" height="15"><path d="M0.6 0.6h13.8v13.8H0.6z M5.2 0.6v13.8 M9.8 0.6v13.8 M0.6 5.2h13.8 M0.6 9.8h13.8" fill="none" stroke="#dcdcdc" stroke-width="1.1"/></svg>
<svg class="i" style="left:198px;top:205px" width="12" height="14"><path d="M1.5 4h9l-.8 9.5H2.3z M0.5 2.2h11v1.3H0.5z M4 2.2V0.8h4v1.4" fill="#dcdcdc" stroke="#dcdcdc" stroke-width=".6"/></svg>
<div class="dots" style="left:102px;top:223px;width:15px;height:3px"></div>
<div class="a" style="left:0;top:249px;width:215px;height:1px;background:#555"></div>
<div class="a" style="left:1px;top:228px;width:51px;height:22px;background:#4a4a4a;border:1px solid #585858;border-bottom:none;border-radius:3px 3px 0 0"></div>
<div class="a" style="left:53px;top:230px;width:83px;height:19px;background:#424242;border:1px solid #505050;border-bottom:none;border-radius:3px 3px 0 0"></div>
<div class="t" style="left:10.5px;top:234px;font-size:10.8px;color:#dcdcdc">Layers</div>
<div class="t" style="left:61.5px;top:234.5px;font-size:10.8px;color:#d8d8d8">Compositions</div>
<svg class="i" style="left:2px;top:250px" width="14" height="14"><circle cx="6.8" cy="6.8" r="6" fill="none" stroke="#cfcfcf" stroke-width="1"/><path d="M4.3 7.2h5.3v3.2H4.3z" fill="#dcdcdc"/><path d="M5.2 7.2V5.5a1.7 1.7 0 0 1 3.4 0" fill="none" stroke="#dcdcdc" stroke-width="1"/></svg>
<div class="t" style="left:20.5px;top:252.3px;font-size:10.4px;color:#dcdcdc">Layers</div>
<svg class="i" style="left:182px;top:251px" width="13" height="13"><path d="M4.5 0.5h7.5v7.5H9 M0.5 4.5h7.5V12H0.5z M4.5 4.5V0.5" fill="none" stroke="#d4d4d4" stroke-width="1.1"/></svg>
<svg class="i" style="left:201px;top:252px" width="10" height="10"><path d="M0.5 0.5l9 9M9.5 0.5l-9 9" stroke="#dcdcdc" stroke-width="1.2"/></svg>
<div class="a" style="left:2px;top:265px;width:184px;height:24px;border-radius:3px;background:linear-gradient(#414141,#3b3b3b);border:1px solid #363636"></div>
<div class="t" style="left:5px;top:272.5px;font-size:11px;color:#e0e0e0">Normal</div>
<svg class="i" style="left:173px;top:276px" width="8" height="5"><path d="M0 0.5h6.5L3.25 4z" fill="#a0a0a0"/></svg>
<svg class="i" style="left:193px;top:269px" width="20" height="20"><path d="M2 1.2H14.5L10.3 9.5V15.8L7.3 14.6V9.5Z" fill="none" stroke="#d8d8d8" stroke-width="1.1" stroke-linejoin="round"/><path d="M15 16h5l-2.5 2.5z" fill="#a0a0a0"/></svg>
<div class="a" style="left:2px;top:293px;width:184px;height:24px;border-radius:3px;background:#3b3b3b;border:1px solid #363636"></div>
<div class="a" style="left:2px;top:293px;width:172px;height:23.5px;border-radius:3px 0 0 3px;background:#52759a"></div>
<div class="t" style="left:51.5px;top:300px;font-size:11px;color:#e6e9ee">Opacity:&nbsp;&nbsp;100%</div>
<svg class="i" style="left:177px;top:298px" width="7" height="14"><path d="M0 4h6L3 1z" fill="#6a6a6a"/><path d="M0 9.5h6L3 12.5z" fill="#a0a0a0"/></svg>
<svg class="i" style="left:195.5px;top:299px" width="18" height="18"><path d="M0.3 2.8h10.5M0.3 6.2h10.5M0.3 9.6h10.5" stroke="#dcdcdc" stroke-width="1.5"/><path d="M12 13.5h5l-2.5 2.5z" fill="#a0a0a0"/></svg>
<div class="a" style="left:1px;top:317px;width:201px;height:236px;background:#383838"></div>
<div class="a" style="left:202px;top:317px;width:11px;height:236px;background:#404040"></div>
<div class="a" style="left:202px;top:320px;width:11px;height:10px;border:1px solid #4e4e4e"></div>
<svg class="i" style="left:204px;top:323px" width="8" height="5"><path d="M0 4h6.5L3.25 0.5z" fill="#a8a8a8"/></svg>
<div class="a" style="left:202px;top:420px;width:11px;height:120px;border:1px solid #4a4a4a;border-radius:1px"></div>
<div class="a" style="left:202px;top:541px;width:11px;height:10px;border:1px solid #4e4e4e"></div>
<svg class="i" style="left:204px;top:544px" width="8" height="5"><path d="M0 0.5h6.5L3.25 4z" fill="#a8a8a8"/></svg>
<div class="dots" style="left:216px;top:330px;width:2.2px;height:20px"></div>
<div class="a" style="left:1px;top:319px;width:201px;height:234px;overflow:hidden">
<div class="a" style="left:20px;top:0;width:1px;height:234px;background:#3d3d3d"></div>
<div class="a" style="left:42px;top:0;width:1px;height:234px;background:#3d3d3d"></div>
<div class="a" style="left:53px;top:0;width:1px;height:234px;background:#3d3d3d"></div>
<div class="a" style="left:152px;top:0;width:1px;height:234px;background:#3d3d3d"></div>
<div class="a" style="left:168.5px;top:0;width:1px;height:234px;background:#3d3d3d"></div>
<div class="a" style="left:184px;top:0;width:1px;height:234px;background:#3d3d3d"></div>
</div>
<div class="a" style="left:1px;top:319px;width:201px;height:234px;overflow:hidden">
<div class="a" style="left:0;top:8.5px;width:201px;height:1px;background:#3c3c3c"></div>
<svg class="i" style="left:4.5px;top:-7.75px" width="13" height="12"><path d="M0.8 6.3C2 2.3 4 0.9 6.5 0.9S11 2.3 12.2 6.3" fill="none" stroke="#6a6a6a" stroke-width="0.9"/><path d="M1.2 7.8C3 11.3 10 11.3 11.8 7.8" fill="none" stroke="#8a8a8a" stroke-width="1.1"/></svg>
<div class="a" style="left:22px;top:-6.75px;width:17px;height:9px;background:repeating-conic-gradient(#7a7a7a 0 25%,#8e8e8e 0 50%) 0 0/3px 3px"></div>
<svg class="i" style="left:44px;top:-11.25px" width="11" height="10"><path d="M0.8 2.5L4 5.8 M2 1h4.5v4.5a3 3 0 0 1-5 2" fill="none" stroke="#8a8a8a" stroke-width="1"/></svg>
<div class="t" style="left:59.5px;top:-6.45px;font-size:10.4px;color:#8e8e8e">Frame 10 Back - ...</div>
<svg class="i" style="left:155.5px;top:-9.25px" width="12" height="14"><path d="M0.5 6h11v7H0.5z" fill="#6a6a6a"/><path d="M6.8 6V3.5a2.5 2.5 0 0 1 4.5-1.5" fill="none" stroke="#6a6a6a" stroke-width="1.6"/></svg>
<div class="t" style="left:171px;top:-9.75px;font-size:15px;font-style:italic;color:#6a6a6a">α</div>
<div class="a" style="left:186px;top:-8.75px;width:12px;height:13px;background:repeating-conic-gradient(#5a5a5a 0 25%,#747474 0 50%) 0 0/8px 8.6px"></div>
<div class="a" style="left:0;top:31.0px;width:201px;height:1px;background:#3c3c3c"></div>
<svg class="i" style="left:4.5px;top:14.75px" width="13" height="12"><path d="M0.8 6.3C2 2.3 4 0.9 6.5 0.9S11 2.3 12.2 6.3" fill="none" stroke="#6a6a6a" stroke-width="0.9"/><path d="M1.2 7.8C3 11.3 10 11.3 11.8 7.8" fill="none" stroke="#8a8a8a" stroke-width="1.1"/></svg>
<div class="a" style="left:22px;top:15.75px;width:17px;height:9px;background:repeating-conic-gradient(#7a7a7a 0 25%,#8e8e8e 0 50%) 0 0/3px 3px"></div>
<svg class="i" style="left:44px;top:11.25px" width="11" height="10"><path d="M0.8 2.5L4 5.8 M2 1h4.5v4.5a3 3 0 0 1-5 2" fill="none" stroke="#8a8a8a" stroke-width="1"/></svg>
<div class="t" style="left:59.5px;top:16.05px;font-size:10.4px;color:#8e8e8e">Frame 9 Back</div>
<svg class="i" style="left:155.5px;top:13.25px" width="12" height="14"><path d="M0.5 6h11v7H0.5z" fill="#6a6a6a"/><path d="M6.8 6V3.5a2.5 2.5 0 0 1 4.5-1.5" fill="none" stroke="#6a6a6a" stroke-width="1.6"/></svg>
<div class="t" style="left:171px;top:12.75px;font-size:15px;font-style:italic;color:#6a6a6a">α</div>
<div class="a" style="left:186px;top:13.75px;width:12px;height:13px;background:repeating-conic-gradient(#5a5a5a 0 25%,#747474 0 50%) 0 0/8px 8.6px"></div>
<div class="a" style="left:0;top:53.5px;width:201px;height:1px;background:#3c3c3c"></div>
<svg class="i" style="left:4.5px;top:37.25px" width="13" height="12"><path d="M0.8 6.3C2 2.3 4 0.9 6.5 0.9S11 2.3 12.2 6.3" fill="none" stroke="#6a6a6a" stroke-width="0.9"/><path d="M1.2 7.8C3 11.3 10 11.3 11.8 7.8" fill="none" stroke="#8a8a8a" stroke-width="1.1"/></svg>
<div class="a" style="left:22px;top:38.25px;width:17px;height:9px;background:repeating-conic-gradient(#7a7a7a 0 25%,#8e8e8e 0 50%) 0 0/3px 3px"></div>
<svg class="i" style="left:44px;top:33.75px" width="11" height="10"><path d="M0.8 2.5L4 5.8 M2 1h4.5v4.5a3 3 0 0 1-5 2" fill="none" stroke="#8a8a8a" stroke-width="1"/></svg>
<div class="t" style="left:59.5px;top:38.55px;font-size:10.4px;color:#8e8e8e">Frame 8 Left - B...</div>
<svg class="i" style="left:155.5px;top:35.75px" width="12" height="14"><path d="M0.5 6h11v7H0.5z" fill="#6a6a6a"/><path d="M6.8 6V3.5a2.5 2.5 0 0 1 4.5-1.5" fill="none" stroke="#6a6a6a" stroke-width="1.6"/></svg>
<div class="t" style="left:171px;top:35.25px;font-size:15px;font-style:italic;color:#6a6a6a">α</div>
<div class="a" style="left:186px;top:36.25px;width:12px;height:13px;background:repeating-conic-gradient(#5a5a5a 0 25%,#747474 0 50%) 0 0/8px 8.6px"></div>
<div class="a" style="left:0;top:76.0px;width:201px;height:1px;background:#3c3c3c"></div>
<svg class="i" style="left:4.5px;top:59.75px" width="13" height="12"><path d="M0.8 6.3C2 2.3 4 0.9 6.5 0.9S11 2.3 12.2 6.3" fill="none" stroke="#6a6a6a" stroke-width="0.9"/><path d="M1.2 7.8C3 11.3 10 11.3 11.8 7.8" fill="none" stroke="#8a8a8a" stroke-width="1.1"/></svg>
<div class="a" style="left:22px;top:60.75px;width:17px;height:9px;background:repeating-conic-gradient(#7a7a7a 0 25%,#8e8e8e 0 50%) 0 0/3px 3px"></div>
<svg class="i" style="left:44px;top:56.25px" width="11" height="10"><path d="M0.8 2.5L4 5.8 M2 1h4.5v4.5a3 3 0 0 1-5 2" fill="none" stroke="#8a8a8a" stroke-width="1"/></svg>
<div class="t" style="left:59.5px;top:61.05px;font-size:10.4px;color:#8e8e8e">Frame 7 Left - B...</div>
<svg class="i" style="left:155.5px;top:58.25px" width="12" height="14"><path d="M0.5 6h11v7H0.5z" fill="#6a6a6a"/><path d="M6.8 6V3.5a2.5 2.5 0 0 1 4.5-1.5" fill="none" stroke="#6a6a6a" stroke-width="1.6"/></svg>
<div class="t" style="left:171px;top:57.75px;font-size:15px;font-style:italic;color:#6a6a6a">α</div>
<div class="a" style="left:186px;top:58.75px;width:12px;height:13px;background:repeating-conic-gradient(#5a5a5a 0 25%,#747474 0 50%) 0 0/8px 8.6px"></div>
<div class="a" style="left:0;top:98.5px;width:201px;height:1px;background:#3c3c3c"></div>
<svg class="i" style="left:4.5px;top:82.25px" width="13" height="12"><path d="M0.8 6.3C2 2.3 4 0.9 6.5 0.9S11 2.3 12.2 6.3" fill="none" stroke="#6a6a6a" stroke-width="0.9"/><path d="M1.2 7.8C3 11.3 10 11.3 11.8 7.8" fill="none" stroke="#8a8a8a" stroke-width="1.1"/></svg>
<div class="a" style="left:22px;top:83.25px;width:17px;height:9px;background:repeating-conic-gradient(#7a7a7a 0 25%,#8e8e8e 0 50%) 0 0/3px 3px"></div>
<svg class="i" style="left:44px;top:78.75px" width="11" height="10"><path d="M0.8 2.5L4 5.8 M2 1h4.5v4.5a3 3 0 0 1-5 2" fill="none" stroke="#8a8a8a" stroke-width="1"/></svg>
<div class="t" style="left:59.5px;top:83.55px;font-size:10.4px;color:#8e8e8e">Frame 6 Left-  B...</div>
<svg class="i" style="left:155.5px;top:80.75px" width="12" height="14"><path d="M0.5 6h11v7H0.5z" fill="#6a6a6a"/><path d="M6.8 6V3.5a2.5 2.5 0 0 1 4.5-1.5" fill="none" stroke="#6a6a6a" stroke-width="1.6"/></svg>
<div class="t" style="left:171px;top:80.25px;font-size:15px;font-style:italic;color:#6a6a6a">α</div>
<div class="a" style="left:186px;top:81.25px;width:12px;height:13px;background:repeating-conic-gradient(#5a5a5a 0 25%,#747474 0 50%) 0 0/8px 8.6px"></div>
<div class="a" style="left:0;top:121.0px;width:201px;height:1px;background:#3c3c3c"></div>
<svg class="i" style="left:4.5px;top:104.75px" width="13" height="12"><path d="M0.8 6.3C2 2.3 4 0.9 6.5 0.9S11 2.3 12.2 6.3" fill="none" stroke="#6a6a6a" stroke-width="0.9"/><path d="M1.2 7.8C3 11.3 10 11.3 11.8 7.8" fill="none" stroke="#8a8a8a" stroke-width="1.1"/></svg>
<div class="a" style="left:22px;top:105.75px;width:17px;height:9px;background:repeating-conic-gradient(#7a7a7a 0 25%,#8e8e8e 0 50%) 0 0/3px 3px"></div>
<svg class="i" style="left:44px;top:101.25px" width="11" height="10"><path d="M0.8 2.5L4 5.8 M2 1h4.5v4.5a3 3 0 0 1-5 2" fill="none" stroke="#8a8a8a" stroke-width="1"/></svg>
<div class="t" style="left:59.5px;top:106.05px;font-size:10.4px;color:#8e8e8e">Frame 5 Left</div>
<svg class="i" style="left:155.5px;top:103.25px" width="12" height="14"><path d="M0.5 6h11v7H0.5z" fill="#6a6a6a"/><path d="M6.8 6V3.5a2.5 2.5 0 0 1 4.5-1.5" fill="none" stroke="#6a6a6a" stroke-width="1.6"/></svg>
<div class="t" style="left:171px;top:102.75px;font-size:15px;font-style:italic;color:#6a6a6a">α</div>
<div class="a" style="left:186px;top:103.75px;width:12px;height:13px;background:repeating-conic-gradient(#5a5a5a 0 25%,#747474 0 50%) 0 0/8px 8.6px"></div>
<div class="a" style="left:0;top:143.5px;width:201px;height:1px;background:#3c3c3c"></div>
<svg class="i" style="left:4.5px;top:127.25px" width="13" height="12"><path d="M0.8 6.3C2 2.3 4 0.9 6.5 0.9S11 2.3 12.2 6.3" fill="none" stroke="#6a6a6a" stroke-width="0.9"/><path d="M1.2 7.8C3 11.3 10 11.3 11.8 7.8" fill="none" stroke="#8a8a8a" stroke-width="1.1"/></svg>
<div class="a" style="left:22px;top:128.25px;width:17px;height:9px;background:repeating-conic-gradient(#7a7a7a 0 25%,#8e8e8e 0 50%) 0 0/3px 3px"></div>
<svg class="i" style="left:44px;top:123.75px" width="11" height="10"><path d="M0.8 2.5L4 5.8 M2 1h4.5v4.5a3 3 0 0 1-5 2" fill="none" stroke="#8a8a8a" stroke-width="1"/></svg>
<div class="t" style="left:59.5px;top:128.55px;font-size:10.4px;color:#8e8e8e">Frame 4 Front - ...</div>
<svg class="i" style="left:155.5px;top:125.75px" width="12" height="14"><path d="M0.5 6h11v7H0.5z" fill="#6a6a6a"/><path d="M6.8 6V3.5a2.5 2.5 0 0 1 4.5-1.5" fill="none" stroke="#6a6a6a" stroke-width="1.6"/></svg>
<div class="t" style="left:171px;top:125.25px;font-size:15px;font-style:italic;color:#6a6a6a">α</div>
<div class="a" style="left:186px;top:126.25px;width:12px;height:13px;background:repeating-conic-gradient(#5a5a5a 0 25%,#747474 0 50%) 0 0/8px 8.6px"></div>
<div class="a" style="left:0;top:166.0px;width:201px;height:1px;background:#3c3c3c"></div>
<svg class="i" style="left:4.5px;top:149.75px" width="13" height="12"><path d="M0.8 6.3C2 2.3 4 0.9 6.5 0.9S11 2.3 12.2 6.3" fill="none" stroke="#6a6a6a" stroke-width="0.9"/><path d="M1.2 7.8C3 11.3 10 11.3 11.8 7.8" fill="none" stroke="#8a8a8a" stroke-width="1.1"/></svg>
<div class="a" style="left:22px;top:150.75px;width:17px;height:9px;background:repeating-conic-gradient(#7a7a7a 0 25%,#8e8e8e 0 50%) 0 0/3px 3px"></div>
<svg class="i" style="left:44px;top:146.25px" width="11" height="10"><path d="M0.8 2.5L4 5.8 M2 1h4.5v4.5a3 3 0 0 1-5 2" fill="none" stroke="#8a8a8a" stroke-width="1"/></svg>
<div class="t" style="left:59.5px;top:151.05px;font-size:10.4px;color:#8e8e8e">Frame 3 Front - ...</div>
<svg class="i" style="left:155.5px;top:148.25px" width="12" height="14"><path d="M0.5 6h11v7H0.5z" fill="#6a6a6a"/><path d="M6.8 6V3.5a2.5 2.5 0 0 1 4.5-1.5" fill="none" stroke="#6a6a6a" stroke-width="1.6"/></svg>
<div class="t" style="left:171px;top:147.75px;font-size:15px;font-style:italic;color:#6a6a6a">α</div>
<div class="a" style="left:186px;top:148.75px;width:12px;height:13px;background:repeating-conic-gradient(#5a5a5a 0 25%,#747474 0 50%) 0 0/8px 8.6px"></div>
<div class="a" style="left:0;top:188.5px;width:201px;height:1px;background:#3c3c3c"></div>
<svg class="i" style="left:4.5px;top:172.25px" width="13" height="12"><path d="M0.8 6.3C2 2.3 4 0.9 6.5 0.9S11 2.3 12.2 6.3" fill="none" stroke="#6a6a6a" stroke-width="0.9"/><path d="M1.2 7.8C3 11.3 10 11.3 11.8 7.8" fill="none" stroke="#8a8a8a" stroke-width="1.1"/></svg>
<div class="a" style="left:22px;top:173.25px;width:17px;height:9px;background:repeating-conic-gradient(#7a7a7a 0 25%,#8e8e8e 0 50%) 0 0/3px 3px"></div>
<svg class="i" style="left:44px;top:168.75px" width="11" height="10"><path d="M0.8 2.5L4 5.8 M2 1h4.5v4.5a3 3 0 0 1-5 2" fill="none" stroke="#8a8a8a" stroke-width="1"/></svg>
<div class="t" style="left:59.5px;top:173.55px;font-size:10.4px;color:#8e8e8e">Frame 2 Front - ...</div>
<svg class="i" style="left:155.5px;top:170.75px" width="12" height="14"><path d="M0.5 6h11v7H0.5z" fill="#6a6a6a"/><path d="M6.8 6V3.5a2.5 2.5 0 0 1 4.5-1.5" fill="none" stroke="#6a6a6a" stroke-width="1.6"/></svg>
<div class="t" style="left:171px;top:170.25px;font-size:15px;font-style:italic;color:#6a6a6a">α</div>
<div class="a" style="left:186px;top:171.25px;width:12px;height:13px;background:repeating-conic-gradient(#5a5a5a 0 25%,#747474 0 50%) 0 0/8px 8.6px"></div>
<div class="a" style="left:19.5px;top:189px;width:182px;height:22.5px;background:#52759a"></div>
<div class="a" style="left:42.5px;top:189px;width:1px;height:22.5px;background:#466684"></div>
<div class="a" style="left:54px;top:189px;width:1px;height:22.5px;background:#466684"></div>
<div class="a" style="left:135px;top:189px;width:1px;height:22.5px;background:#466684"></div>
<div class="a" style="left:152px;top:189px;width:1px;height:22.5px;background:#466684"></div>
<div class="a" style="left:168px;top:189px;width:1px;height:22.5px;background:#466684"></div>
<div class="a" style="left:184px;top:189px;width:1px;height:22.5px;background:#466684"></div>
<div class="a" style="left:0;top:211.5px;width:201px;height:1px;background:#3c3c3c"></div>
<svg class="i" style="left:4.5px;top:194.75px" width="13" height="12"><circle cx="6.5" cy="4.6" r="3.5" fill="#e8e8e8"/><path d="M0.8 6.3C2 2.3 4 0.9 6.5 0.9S11 2.3 12.2 6.3" fill="none" stroke="#e8e8e8" stroke-width="0.9"/><path d="M1.2 7.8C3 11.3 10 11.3 11.8 7.8" fill="none" stroke="#e8e8e8" stroke-width="1.1"/></svg>
<svg class="i" style="left:4.5px;top:217.25px" width="13" height="12"><circle cx="6.5" cy="4.6" r="3.5" fill="#e0e0e0"/><path d="M0.8 6.3C2 2.3 4 0.9 6.5 0.9S11 2.3 12.2 6.3" fill="none" stroke="#e0e0e0" stroke-width="0.9"/><path d="M1.2 7.8C3 11.3 10 11.3 11.8 7.8" fill="none" stroke="#e0e0e0" stroke-width="1.1"/></svg>
<div class="a" style="left:22px;top:194.75px;width:18px;height:11px;border:1px solid #3a3a3a;background:repeating-conic-gradient(#e8e8e8 0 25%,#fff 0 50%) 0 0/3px 3px"></div>
<svg class="i" style="left:44px;top:191.25px" width="11" height="18"><path d="M0.8 2.5L4 5.8 M2 1h4.5v4.5a3 3 0 0 1-5 2" fill="none" stroke="#e0e0e0" stroke-width="1"/><rect x="0.5" y="11" width="10" height="6.5" fill="none" stroke="#e0e0e0" stroke-width="1"/><path d="M4 12.5v3.5l3-1.75z" fill="#e0e0e0"/></svg>
<div class="t" style="left:59.5px;top:196.05px;font-size:10.2px;font-weight:bold;color:#eef1f4">Frame 1 Front</div>
<svg class="i" style="left:140px;top:194.75px" width="9" height="12"><path d="M4.5 0.5a4 4 0 0 1 2.5 7.2v2H2v-2A4 4 0 0 1 4.5 0.5z M2.5 10.5h4v1h-4z" fill="#8fa8c0"/></svg>
<svg class="i" style="left:155.5px;top:193.25px" width="12" height="14"><path d="M0.5 6h11v7H0.5z" fill="#7e98b3"/><path d="M6.8 6V3.5a2.5 2.5 0 0 1 4.5-1.5" fill="none" stroke="#7e98b3" stroke-width="1.6"/></svg>
<div class="t" style="left:171px;top:192.75px;font-size:15px;font-style:italic;color:#7e98b3">α</div>
<div class="a" style="left:186px;top:193.75px;width:12px;height:13px;background:repeating-conic-gradient(#6d8aa8 0 25%,#8aa3bc 0 50%) 0 0/8px 8.6px"></div>
<div class="a" style="left:22px;top:217.75px;width:17px;height:10px;background:#fff"></div>
<svg class="i" style="left:44px;top:213.75px" width="11" height="10"><path d="M0.8 2.5L4 5.8 M2 1h4.5v4.5a3 3 0 0 1-5 2" fill="none" stroke="#d8d8d8" stroke-width="1"/></svg>
<div class="t" style="left:59.5px;top:218.55px;font-size:10.4px;color:#e0e0e0">Background</div>
<svg class="i" style="left:155.5px;top:215.75px" width="12" height="14"><path d="M0.5 6h11v7H0.5z" fill="#6e6e6e"/><path d="M6.8 6V3.5a2.5 2.5 0 0 1 4.5-1.5" fill="none" stroke="#6e6e6e" stroke-width="1.6"/></svg>
<div class="t" style="left:171px;top:215.25px;font-size:15px;font-style:italic;color:#6e6e6e">α</div>
<div class="a" style="left:186px;top:216.25px;width:12px;height:13px;background:repeating-conic-gradient(#5a5a5a 0 25%,#777 0 50%) 0 0/8px 8.6px"></div>
</div>
<svg class="i" style="left:6px;top:559px" width="16" height="16"><path d="M7.5 0.5v15M0 8h15" stroke="#dcdcdc" stroke-width="1.5"/></svg>
<svg class="i" style="left:27px;top:566px" width="8" height="5"><path d="M0 0.5h6.5L3.25 4z" fill="#9a9a9a"/></svg>
<svg class="i" style="left:41px;top:558px" width="18" height="18"><path d="M4.5 0.8h12.5v12.5H4.5z M0.8 4.5v12.7h12.5" fill="none" stroke="#dcdcdc" stroke-width="1.4"/></svg>
<svg class="i" style="left:67px;top:561px" width="18" height="10"><path d="M0.8 1l8.2 7.5L17.2 1" fill="none" stroke="#dcdcdc" stroke-width="1.5"/></svg>
<svg class="i" style="left:94px;top:561px" width="18" height="10"><path d="M0.8 8.8L9 1.3l8.2 7.5" fill="none" stroke="#dcdcdc" stroke-width="1.5"/></svg>
<svg class="i" style="left:121px;top:559px" width="18" height="16"><path d="M0.5 3h16.5M0.5 8h16.5M0.5 13h16.5" stroke="#dcdcdc" stroke-width="1.2"/><path d="M11 1.3h2.2v3.4H11z M5 6.3h2.2v3.4H5z M9 11.3h2.2v3.4H9z" fill="#dcdcdc"/></svg>
<svg class="i" style="left:194px;top:558px" width="15" height="18"><path d="M1.5 5.5h12l-.9 12H2.4z" fill="#dcdcdc"/><path d="M0.5 3.5h14v1.5H0.5z" fill="#dcdcdc"/><path d="M4.5 3.5V1.3a1 1 0 0 1 1-1h4a1 1 0 0 1 1 1v2.2" fill="none" stroke="#dcdcdc" stroke-width="1.2"/></svg>
<!-- CANVAS -->
<div class="a" style="left:221px;top:102px;width:1054px;height:25px;background:#484848;border:1px solid #575757;border-bottom:none;border-radius:3px 3px 0 0"></div>
<div class="a" style="left:231px;top:108px;width:11px;height:11px;border-radius:50%;background:conic-gradient(from 0deg,#f05ad8,#f7e040 90deg,#7ee070 150deg,#40d8f0 210deg,#5a70f0 270deg,#e040f0 330deg,#f05ad8)"></div>
<svg class="i" style="left:229px;top:106px" width="14" height="14"><path d="M2.5 2.5L9 8.5" stroke="#333" stroke-width="2" stroke-linecap="round"/><circle cx="9.3" cy="9" r="1.3" fill="#222"/></svg>
<div class="t" style="left:678.5px;top:109.5px;font-size:11.2px;color:#d4d4d4">Char _(tie_down)_FIN.psd *</div>
<svg class="i" style="left:1256px;top:109px" width="11" height="11"><path d="M0.8 0.8l9.4 9.4M10.2 0.8l-9.4 9.4" stroke="#e0e0e0" stroke-width="1.5"/></svg>
<div class="a" style="left:220px;top:127px;width:1048px;height:441px;background:#808080"></div>
<div class="a" style="left:352px;top:127px;width:784px;height:441px;background:#fff"></div>
<div class="a" style="left:220px;top:568px;width:1048px;height:12px;background:#3f3f3f"></div>
<div class="a" style="left:1268px;top:127px;width:12px;height:441px;background:#3f3f3f"></div>
<div class="a" style="left:1268px;top:568px;width:12px;height:12px;background:#474747"></div>
<div class="a" style="left:1269px;top:128px;width:10px;height:12px;border:1px solid #4d4d4d;background:#424242"></div>
<svg class="i" style="left:1270.5px;top:131px" width="8" height="5"><path d="M0 4h6.5L3.25 0.5z" fill="#b0b0b0"/></svg>
<div class="a" style="left:1269px;top:555px;width:10px;height:12px;border:1px solid #4d4d4d;background:#424242"></div>
<svg class="i" style="left:1270.5px;top:559px" width="8" height="5"><path d="M0 0.5h6.5L3.25 4z" fill="#b0b0b0"/></svg>
<div class="a" style="left:1268px;top:270px;width:12px;height:150px;background:#444;border:1px solid #4a4a4a"></div>
<div class="a" style="left:220.5px;top:569px;width:11px;height:10px;border:1px solid #4d4d4d;background:#424242"></div>
<svg class="i" style="left:224px;top:571px" width="5" height="7"><path d="M4 0v6.5L0.5 3.25z" fill="#b0b0b0"/></svg>
<div class="a" style="left:1256.5px;top:569px;width:11px;height:10px;border:1px solid #4d4d4d;background:#424242"></div>
<svg class="i" style="left:1260px;top:571px" width="5" height="7"><path d="M0.5 0v6.5L4 3.25z" fill="#b0b0b0"/></svg>
<div class="a" style="left:543px;top:569px;width:401px;height:10px;border:1px solid #4a4a4a;border-radius:1px;background:#424242"></div>
<div class="dots" style="left:634px;top:581px;width:15px;height:3px"></div>
<!-- drawing -->
<svg class="i" style="left:0;top:0" width="1280" height="800"><g transform="translate(660,190) scale(0.2)" fill="none" stroke="#3838d8" stroke-width="5.5" stroke-linecap="round" stroke-linejoin="round" opacity="0.82">
<path d="M290 245C250 225 240 160 270 130C300 100 360 105 410 150C440 180 480 200 515 197"/>
<path d="M330 160C300 170 290 210 300 240"/>
<path d="M385 118C430 95 500 95 550 125C580 145 595 180 590 230"/>
<path d="M322 195C312 260 318 320 338 360C370 395 430 402 480 382C525 362 555 335 570 300"/>
<path d="M560 240C575 225 602 240 595 268C590 288 575 292 565 282"/>
<path d="M572 290L590 340M582 288L602 332"/>
<path d="M575 95C635 115 650 200 650 300C650 400 660 500 700 590C715 630 735 660 742 668C700 660 660 640 630 600C600 545 592 460 588 380C585 320 588 280 585 250"/>
<path d="M335 240C350 232 368 236 378 248"/>
<path d="M470 222C490 215 510 228 515 242"/>
<ellipse cx="375" cy="292" rx="28" ry="30"/>
<ellipse cx="478" cy="268" rx="32" ry="34"/>
<path d="M345 272L328 265M348 285L330 290M545 250L562 245M540 262L556 268"/>
<path d="M420 355C440 368 462 355 466 342"/>
<path d="M300 322L332 302M296 345L325 326M306 362L322 345" stroke-width="4"/>
<path d="M392 398C388 420 384 440 378 460M462 392C464 410 468 425 475 440"/>
<path d="M378 415C350 440 330 480 318 525"/>
<path d="M372 430C378 470 390 495 402 502C425 482 445 488 470 500"/>
<path d="M462 440L492 458C475 495 455 520 442 552"/>
<path d="M492 458C520 478 540 500 545 540C552 620 560 700 565 830"/>
<path d="M470 505C490 560 505 640 515 700C522 760 530 800 540 830"/>
<path d="M315 522C285 542 205 552 142 552C112 550 92 530 70 500C60 512 72 530 92 545C82 558 70 570 76 580C102 570 142 570 182 575C232 570 282 560 312 552"/>
<path d="M300 572C220 660 150 830 132 1030C135 1045 150 1060 155 1080"/>
<path d="M150 1075C200 1100 250 1120 300 1130C350 1140 400 1140 450 1140C500 1130 540 1110 570 1080"/>
<path d="M452 615C500 740 540 900 570 1080"/>
<path d="M345 600L285 1125" stroke-width="3" opacity=".7"/>
<path d="M565 830C580 840 620 850 665 860C640 865 600 870 580 865L565 885C555 870 540 840 540 830"/>
<path d="M160 1085L170 1400C150 1420 110 1440 100 1455M265 1130C255 1200 245 1300 240 1400"/>
<path d="M480 1145C520 1220 570 1300 610 1380M580 1100C620 1200 660 1300 720 1400"/>
</g>
<g transform="translate(660,190) scale(0.2)" fill="#3030d4" stroke="none">
<path d="M300 556C340 588 400 608 452 613L449 633C398 628 338 608 297 576Z"/>
<path d="M520 50L545 45L557 132L537 137Z M568 70L605 78L562 138L550 130Z"/>
<ellipse cx="388" cy="290" rx="12" ry="17"/>
<ellipse cx="492" cy="266" rx="14" ry="19"/>
<circle cx="340" cy="540" r="6"/><circle cx="332" cy="578" r="6"/><circle cx="322" cy="620" r="6"/><circle cx="312" cy="660" r="6"/><circle cx="303" cy="700" r="6"/><circle cx="294" cy="735" r="6"/><circle cx="288" cy="770" r="6"/>
<circle cx="282" cy="810" r="6"/><circle cx="278" cy="850" r="6"/><circle cx="273" cy="888" r="6"/><circle cx="270" cy="926" r="6"/><circle cx="268" cy="965" r="6"/><circle cx="266" cy="1004" r="6"/><circle cx="268" cy="1045" r="6"/><circle cx="268" cy="1085" r="6"/>
<path d="M98 1445C130 1435 160 1420 180 1405L242 1400L247 1460L217 1465L212 1445C172 1460 132 1470 100 1465Z"/>
<path d="M608 1375L640 1400C680 1420 720 1430 742 1420C747 1440 742 1470 712 1470C682 1460 642 1440 620 1420Z"/>
</g></svg>
<!-- ANIMATION DOCK -->
<div class="a" style="left:0;top:606px;width:1028px;height:1px;background:#555"></div>
<div class="a" style="left:1px;top:586px;width:110px;height:21px;background:#4a4a4a;border:1px solid #585858;border-bottom:none;border-radius:3px 3px 0 0"></div>
<div class="a" style="left:111px;top:588px;width:102px;height:18px;background:#424242;border:1px solid #505050;border-bottom:none;border-radius:3px 3px 0 0"></div>
<div class="t" style="left:10.3px;top:591.5px;font-size:10.5px;color:#dcdcdc">Animation Timeline</div>
<div class="t" style="left:120px;top:592px;font-size:10.5px;color:#d8d8d8">Animation Curves</div>
<div class="a" style="left:0;top:607px;width:1028px;height:29px;background:#4a4a4a"></div>
<div class="t" style="left:8px;top:615.5px;font-size:10.5px;color:#dcdcdc">Animation Timeline</div>
<svg class="i" style="left:133px;top:614px" width="13" height="15"><path d="M0.5 0.5h1.8v14H0.5z M10.5 0.5h1.8v14h-1.8z" fill="#d8d8d8"/><path d="M3 7.5L9.8 1v13z" fill="#d8d8d8"/></svg>
<svg class="i" style="left:161px;top:614px" width="12" height="15"><path d="M9 0.5h1.8v14H9z" fill="#d8d8d8"/><path d="M0.5 7.5L7.8 1v13z" fill="#d8d8d8"/></svg>
<svg class="i" style="left:190px;top:615px" width="12" height="12"><rect x="0" y="0" width="11" height="11" fill="#d8d8d8"/></svg>
<svg class="i" style="left:219px;top:614px" width="10" height="15"><path d="M0.5 1v13L8.5 7.5z" fill="#d8d8d8"/></svg>
<svg class="i" style="left:246px;top:614px" width="12" height="15"><path d="M0.5 0.5h1.8v14H0.5z" fill="#d8d8d8"/><path d="M3.5 1v13l7.5-6.5z" fill="#d8d8d8"/></svg>
<svg class="i" style="left:273px;top:614px" width="14" height="15"><path d="M0.5 0.5h1.8v14H0.5z M11 0.5h1.8v14H11z" fill="#d8d8d8"/><path d="M3 1v13l7.5-6.5z" fill="#d8d8d8"/></svg>
<div class="a" style="left:307px;top:612px;width:64px;height:19px;background:#3b3b3b;border:1px solid #404040;border-radius:3px"></div>
<div class="a" style="left:359px;top:613px;width:11px;height:17px;background:#444"></div>
<div class="t" style="left:337px;top:616px;font-size:10.8px;color:#dcdcdc">#&nbsp;&nbsp;0</div>
<svg class="i" style="left:361px;top:615px" width="8" height="13"><path d="M0.5 4h6L3.5 1.5z" fill="#8a8a8a"/><path d="M0.5 9h6L3.5 11.5z" fill="#8a8a8a"/></svg>
<div class="a" style="left:385px;top:609px;width:24px;height:23px;background:#3d3d3d;border:1px solid #363636;border-radius:3px"></div>
<svg class="i" style="left:389px;top:612px" width="17" height="17"><path d="M1 3.5h14v9H4.5" fill="none" stroke="#d8d8d8" stroke-width="1.3"/><path d="M1 3.5v9" stroke="#d8d8d8" stroke-width="1.3" stroke-dasharray="1.2 1"/><path d="M15 3.5v9" stroke="#d8d8d8" stroke-width="1.3"/><path d="M6.5 5.3v5.2l3.8-2.6z" fill="#d8d8d8"/><path d="M14 0.8L11.5 3.5M4 12.5L1.5 15.5" stroke="#d8d8d8" stroke-width="1.2"/></svg>
<div class="a" style="left:410px;top:612px;width:93px;height:19px;background:#3a3a3a;border:1px solid #404040;border-radius:3px"></div>
<div class="a" style="left:410px;top:613px;width:34px;height:17px;background:#52759a;border-radius:2px 0 0 2px"></div>
<div class="a" style="left:491px;top:613px;width:11px;height:17px;background:#444"></div>
<div class="t" style="left:417.5px;top:615.5px;font-size:10.8px;color:#e0e0e0">Speed: 100 %</div>
<svg class="i" style="left:493px;top:615px" width="8" height="13"><path d="M0.5 4h6L3.5 1.5z" fill="#8a8a8a"/><path d="M0.5 9h6L3.5 11.5z" fill="#8a8a8a"/></svg>
<svg class="i" style="left:520px;top:613px" width="17" height="14"><rect x="0.8" y="1.3" width="14.5" height="11" fill="none" stroke="#d8d8d8" stroke-width="1.4"/><path d="M3.3 2.5v8.6 M12.8 2.5v8.6" stroke="#d8d8d8" stroke-width=".9"/></svg>
<svg class="i" style="left:545px;top:612px" width="18" height="15"><rect x="4" y="0.8" width="13" height="9" fill="none" stroke="#d8d8d8" stroke-width="1.3"/><path d="M2.3 3.5v9.8h11.5 M0.8 5.5v9h11" fill="none" stroke="#d8d8d8" stroke-width="1.2"/></svg>
<svg class="i" style="left:570px;top:612px" width="18" height="16"><rect x="0.8" y="2" width="15" height="11" fill="none" stroke="#d8d8d8" stroke-width="1.3"/><path d="M3.3 3.5v8 M13.3 3.5v8" stroke="#d8d8d8" stroke-width=".9"/><path d="M14 0.5L3.5 15.5" stroke="#d8d8d8" stroke-width="1.3"/></svg>
<svg class="i" style="left:899px;top:613px" width="18" height="17"><path d="M9 0.5C4 4 0.5 8 0.5 12a5 5 0 0 0 2.5 4.3C2 12 5 6 9 0.5z M9 0.5C6.5 5 5 10 6 16.5h1.3C7 11 8 5 9 0.5z M9 0.5C10 5 11 11 10.7 16.5H12C13 10 11.5 5 9 0.5z M9 0.5C13 6 16 12 15 16.3a5 5 0 0 0 2.5-4.3C17.5 8 14 4 9 0.5z" fill="#d8d8d8"/></svg>
<svg class="i" style="left:926px;top:612px" width="18" height="18"><path d="M0.5 2h15M0.5 7h15M0.5 12h15" stroke="#d8d8d8" stroke-width="2.2"/><path d="M13 15h4.5l-2.25 2.5z" fill="#a8a8a8"/></svg>
<svg class="i" style="left:979px;top:614px" width="13" height="13"><path d="M4.5 0.5h7.5v7.5H9 M0.5 4.5h7.5V12H0.5z M4.5 4.5V0.5" fill="none" stroke="#d4d4d4" stroke-width="1.1"/></svg>
<svg class="i" style="left:1003px;top:616px" width="10" height="10"><path d="M0.5 0.5l9 9M9.5 0.5l-9 9" stroke="#dcdcdc" stroke-width="1.2"/></svg>
<div class="a" style="left:0;top:636px;width:173px;height:17px;background:#3b3b3b"></div>
<div class="a" style="left:173px;top:636px;width:855px;height:17px;background:#353535"></div>
<svg class="i" style="left:5px;top:639px" width="13" height="13"><path d="M5.5 0.5v11M0 6h11" stroke="#d8d8d8" stroke-width="1.6"/><path d="M9 10h3.5l-1.75 2z" fill="#a8a8a8"/></svg>
<svg class="i" style="left:24px;top:639px" width="12" height="13"><path d="M0.5 4h2.5L6.5 0.8v10L3 7.5H0.5z" fill="#d8d8d8"/><path d="M8 10h3.5l-1.75 2z" fill="#a8a8a8"/></svg>
<svg class="i" style="left:158px;top:639px" width="12" height="12"><path d="M0.5 3.5V0.5h11v3 M0.5 8.5v3h11v-3" fill="none" stroke="#d8d8d8" stroke-width="1"/><path d="M2 6h8" stroke="#d8d8d8" stroke-width="1.4"/><path d="M0.8 6l2.7-2.4v4.8z M11.2 6L8.5 3.6v4.8z" fill="#d8d8d8"/></svg>
<div class="a" style="left:0;top:653px;width:173px;height:122px;background:#3a3a3a"></div>
<div class="a" style="left:0;top:693px;width:173px;height:82px;background:#434343"></div>
<div class="a" style="left:173px;top:653px;width:855px;height:122px;background:#383838"></div>
<div class="a" style="left:2px;top:673.5px;width:171px;height:1.5px;background:#4f78a0"></div>
<div class="a" style="left:2px;top:691px;width:171px;height:1.5px;background:#4f78a0"></div>
<svg class="i" style="left:4px;top:658px" width="10" height="10"><path d="M5.5 0.5l4 4-1 .6-.6-.4-1.6 1.6c.3 1 .1 1.7-.6 2.4L3.8 6.3l-3 3-.3-.3 3-3L1.5 3.6c.7-.7 1.5-.9 2.4-.6l1.6-1.6-.4-.6z" fill="#cfcfcf"/></svg>
<div class="t" style="left:17.5px;top:659px;font-size:10.6px;color:#e0e0e0">ANIMATION</div>
<svg class="i" style="left:4px;top:678px" width="10" height="10"><path d="M5.5 0.5l4 4-1 .6-.6-.4-1.6 1.6c.3 1 .1 1.7-.6 2.4L3.8 6.3l-3 3-.3-.3 3-3L1.5 3.6c.7-.7 1.5-.9 2.4-.6l1.6-1.6-.4-.6z" fill="#8a8a8a"/></svg>
<div class="t" style="left:17.5px;top:679px;font-size:10.6px;color:#e0e0e0">Frame 1 Front</div>
<svg class="i" style="left:113.5px;top:657px" width="13" height="12"><circle cx="6.5" cy="4.6" r="3.5" fill="#e8e8e8"/><path d="M0.8 6.3C2 2.3 4 0.9 6.5 0.9S11 2.3 12.2 6.3" fill="none" stroke="#dcdcdc" stroke-width="0.9"/><path d="M1.2 7.8C3 11.3 10 11.3 11.8 7.8" fill="none" stroke="#e8e8e8" stroke-width="1.1"/></svg>
<svg class="i" style="left:130.5px;top:656.5px" width="12" height="13"><path d="M0.5 6h10.5v6.5H0.5z" fill="#6c6c6c"/><path d="M6.5 6V3.3a2.4 2.4 0 0 1 4.3-1.4" fill="none" stroke="#6c6c6c" stroke-width="1.5"/></svg>
<div class="t" style="left:144.5px;top:656.5px;font-size:14px;font-style:italic;color:#6a6a6a">α</div>
<div class="a" style="left:159px;top:656px;width:11px;height:14px;background:repeating-conic-gradient(#5a5a5a 0 25%,#777 0 50%) 0 0/7.5px 7px"></div>
<svg class="i" style="left:98.5px;top:677px" width="13" height="12"><circle cx="6.5" cy="4.6" r="3.5" fill="#e8e8e8"/><path d="M0.8 6.3C2 2.3 4 0.9 6.5 0.9S11 2.3 12.2 6.3" fill="none" stroke="#dcdcdc" stroke-width="0.9"/><path d="M1.2 7.8C3 11.3 10 11.3 11.8 7.8" fill="none" stroke="#e8e8e8" stroke-width="1.1"/></svg>
<svg class="i" style="left:115px;top:676.5px" width="12" height="13"><path d="M0.5 6h10.5v6.5H0.5z" fill="#6c6c6c"/><path d="M6.5 6V3.3a2.4 2.4 0 0 1 4.3-1.4" fill="none" stroke="#6c6c6c" stroke-width="1.5"/></svg>
<div class="t" style="left:129px;top:676.5px;font-size:14px;font-style:italic;color:#6a6a6a">α</div>
<div class="a" style="left:144px;top:676px;width:13px;height:14px;background:repeating-conic-gradient(#5a5a5a 0 25%,#777 0 50%) 0 0/8.6px 7px"></div>
<div class="a" style="left:162px;top:678px;width:6px;height:10px;background:#6a6a6a;border-radius:3px 3px 1px 1px"></div>
<div class="t" style="left:175.5px;top:636px;font-size:10.5px;color:#dcdcdc">0</div>
<div class="t" style="left:220.5px;top:636px;font-size:10.5px;color:#dcdcdc">3</div>
<div class="a" style="left:217.5px;top:637px;width:1px;height:11px;background:#393939"></div>
<div class="t" style="left:265.5px;top:636px;font-size:10.5px;color:#dcdcdc">6</div>
<div class="a" style="left:262.5px;top:637px;width:1px;height:11px;background:#393939"></div>
<div class="t" style="left:310.5px;top:636px;font-size:10.5px;color:#dcdcdc">9</div>
<div class="a" style="left:307.5px;top:637px;width:1px;height:11px;background:#393939"></div>
<div class="t" style="left:355.5px;top:636px;font-size:10.5px;color:#dcdcdc">12</div>
<div class="a" style="left:352.5px;top:637px;width:1px;height:11px;background:#393939"></div>
<div class="t" style="left:400.5px;top:636px;font-size:10.5px;color:#dcdcdc">15</div>
<div class="a" style="left:397.5px;top:637px;width:1px;height:11px;background:#393939"></div>
<div class="t" style="left:445.5px;top:636px;font-size:10.5px;color:#dcdcdc">18</div>
<div class="a" style="left:442.5px;top:637px;width:1px;height:11px;background:#393939"></div>
<div class="t" style="left:490.5px;top:636px;font-size:10.5px;color:#dcdcdc">21</div>
<div class="a" style="left:487.5px;top:637px;width:1px;height:11px;background:#393939"></div>
<div class="t" style="left:535.5px;top:636px;font-size:10.5px;color:#dcdcdc">24</div>
<div class="a" style="left:532.5px;top:637px;width:1px;height:11px;background:#393939"></div>
<div class="t" style="left:580.5px;top:636px;font-size:10.5px;color:#dcdcdc">27</div>
<div class="a" style="left:577.5px;top:637px;width:1px;height:11px;background:#393939"></div>
<div class="t" style="left:625.5px;top:636px;font-size:10.5px;color:#dcdcdc">30</div>
<div class="a" style="left:622.5px;top:637px;width:1px;height:11px;background:#393939"></div>
<div class="t" style="left:670.5px;top:636px;font-size:10.5px;color:#dcdcdc">33</div>
<div class="a" style="left:667.5px;top:637px;width:1px;height:11px;background:#393939"></div>
<div class="t" style="left:715.5px;top:636px;font-size:10.5px;color:#dcdcdc">36</div>
<div class="a" style="left:712.5px;top:637px;width:1px;height:11px;background:#393939"></div>
<div class="t" style="left:760.5px;top:636px;font-size:10.5px;color:#dcdcdc">39</div>
<div class="a" style="left:757.5px;top:637px;width:1px;height:11px;background:#393939"></div>
<div class="t" style="left:805.5px;top:636px;font-size:10.5px;color:#dcdcdc">42</div>
<div class="a" style="left:802.5px;top:637px;width:1px;height:11px;background:#393939"></div>
<div class="t" style="left:850.5px;top:636px;font-size:10.5px;color:#dcdcdc">45</div>
<div class="a" style="left:847.5px;top:637px;width:1px;height:11px;background:#393939"></div>
<div class="t" style="left:895.5px;top:636px;font-size:10.5px;color:#dcdcdc">48</div>
<div class="a" style="left:892.5px;top:637px;width:1px;height:11px;background:#393939"></div>
<div class="t" style="left:940.5px;top:636px;font-size:10.5px;color:#dcdcdc">51</div>
<div class="a" style="left:937.5px;top:637px;width:1px;height:11px;background:#393939"></div>
<div class="t" style="left:985.5px;top:636px;font-size:10.5px;color:#dcdcdc">54</div>
<div class="a" style="left:982.5px;top:637px;width:1px;height:11px;background:#393939"></div>
<div class="a" style="left:173px;top:648px;width:14px;height:4px;background:#e8a33a"></div>
<div class="a" style="left:188px;top:648px;width:14px;height:4px;background:#6b6b6b"></div>
<div class="a" style="left:203px;top:648px;width:14px;height:4px;background:#6b6b6b"></div>
<div class="a" style="left:218px;top:648px;width:14px;height:4px;background:#6b6b6b"></div>
<div class="a" style="left:233px;top:648px;width:14px;height:4px;background:#6b6b6b"></div>
<div class="a" style="left:248px;top:648px;width:14px;height:4px;background:#6b6b6b"></div>
<div class="a" style="left:263px;top:648px;width:14px;height:4px;background:#6b6b6b"></div>
<div class="a" style="left:278px;top:648px;width:14px;height:4px;background:#6b6b6b"></div>
<div class="a" style="left:293px;top:648px;width:14px;height:4px;background:#6b6b6b"></div>
<div class="a" style="left:308px;top:648px;width:14px;height:4px;background:#6b6b6b"></div>
<div class="a" style="left:323px;top:648px;width:14px;height:4px;background:#6b6b6b"></div>
<div class="a" style="left:338px;top:648px;width:14px;height:4px;background:#6b6b6b"></div>
<div class="a" style="left:353px;top:648px;width:14px;height:4px;background:#6b6b6b"></div>
<div class="a" style="left:368px;top:648px;width:14px;height:4px;background:#6b6b6b"></div>
<div class="a" style="left:383px;top:648px;width:14px;height:4px;background:#6b6b6b"></div>
<div class="a" style="left:398px;top:648px;width:14px;height:4px;background:#6b6b6b"></div>
<div class="a" style="left:413px;top:648px;width:14px;height:4px;background:#6b6b6b"></div>
<div class="a" style="left:428px;top:648px;width:14px;height:4px;background:#6b6b6b"></div>
<div class="a" style="left:443px;top:648px;width:14px;height:4px;background:#6b6b6b"></div>
<div class="a" style="left:458px;top:648px;width:14px;height:4px;background:#6b6b6b"></div>
<div class="a" style="left:473px;top:648px;width:14px;height:4px;background:#6b6b6b"></div>
<div class="a" style="left:488px;top:648px;width:14px;height:4px;background:#6b6b6b"></div>
<div class="a" style="left:503px;top:648px;width:14px;height:4px;background:#6b6b6b"></div>
<div class="a" style="left:518px;top:648px;width:14px;height:4px;background:#6b6b6b"></div>
<div class="a" style="left:533px;top:648px;width:14px;height:4px;background:#6b6b6b"></div>
<div class="a" style="left:548px;top:648px;width:14px;height:4px;background:#6b6b6b"></div>
<div class="a" style="left:563px;top:648px;width:14px;height:4px;background:#6b6b6b"></div>
<div class="a" style="left:578px;top:648px;width:14px;height:4px;background:#6b6b6b"></div>
<div class="a" style="left:593px;top:648px;width:14px;height:4px;background:#6b6b6b"></div>
<div class="a" style="left:608px;top:648px;width:14px;height:4px;background:#6b6b6b"></div>
<div class="a" style="left:623px;top:648px;width:14px;height:4px;background:#6b6b6b"></div>
<div class="a" style="left:638px;top:648px;width:14px;height:4px;background:#6b6b6b"></div>
<div class="a" style="left:653px;top:648px;width:14px;height:4px;background:#6b6b6b"></div>
<div class="a" style="left:668px;top:648px;width:14px;height:4px;background:#6b6b6b"></div>
<div class="a" style="left:683px;top:648px;width:14px;height:4px;background:#6b6b6b"></div>
<div class="a" style="left:698px;top:648px;width:14px;height:4px;background:#6b6b6b"></div>
<div class="a" style="left:713px;top:648px;width:14px;height:4px;background:#6b6b6b"></div>
<div class="a" style="left:728px;top:648px;width:14px;height:4px;background:#6b6b6b"></div>
<div class="a" style="left:743px;top:648px;width:14px;height:4px;background:#6b6b6b"></div>
<div class="a" style="left:758px;top:648px;width:14px;height:4px;background:#6b6b6b"></div>
<div class="a" style="left:773px;top:648px;width:14px;height:4px;background:#6b6b6b"></div>
<div class="a" style="left:788px;top:648px;width:14px;height:4px;background:#6b6b6b"></div>
<div class="a" style="left:803px;top:648px;width:14px;height:4px;background:#6b6b6b"></div>
<div class="a" style="left:818px;top:648px;width:14px;height:4px;background:#6b6b6b"></div>
<div class="a" style="left:833px;top:648px;width:14px;height:4px;background:#6b6b6b"></div>
<div class="a" style="left:848px;top:648px;width:14px;height:4px;background:#6b6b6b"></div>
<div class="a" style="left:863px;top:648px;width:14px;height:4px;background:#6b6b6b"></div>
<div class="a" style="left:878px;top:648px;width:14px;height:4px;background:#6b6b6b"></div>
<div class="a" style="left:893px;top:648px;width:14px;height:4px;background:#6b6b6b"></div>
<div class="a" style="left:908px;top:648px;width:14px;height:4px;background:#6b6b6b"></div>
<div class="a" style="left:923px;top:648px;width:14px;height:4px;background:#6b6b6b"></div>
<div class="a" style="left:938px;top:648px;width:14px;height:4px;background:#6b6b6b"></div>
<div class="a" style="left:953px;top:648px;width:14px;height:4px;background:#6b6b6b"></div>
<div class="a" style="left:968px;top:648px;width:14px;height:4px;background:#6b6b6b"></div>
<div class="a" style="left:983px;top:648px;width:14px;height:4px;background:#6b6b6b"></div>
<div class="a" style="left:998px;top:648px;width:14px;height:4px;background:#6b6b6b"></div>
<div class="a" style="left:1013px;top:648px;width:14px;height:4px;background:#6b6b6b"></div>
<div class="a" style="left:173px;top:692px;width:855px;height:70px;background:#383838"></div>
<div class="a" style="left:173px;top:673px;width:855px;height:19px;background:#3b4550"></div>
<div class="a" style="left:188px;top:653px;width:1px;height:20px;background:rgba(0,0,0,.07)"></div>
<div class="a" style="left:188px;top:673px;width:1px;height:19px;background:rgba(0,0,0,.16)"></div>
<div class="a" style="left:203px;top:653px;width:1px;height:20px;background:rgba(0,0,0,.07)"></div>
<div class="a" style="left:203px;top:673px;width:1px;height:19px;background:rgba(0,0,0,.16)"></div>
<div class="a" style="left:218px;top:653px;width:1px;height:20px;background:rgba(0,0,0,.07)"></div>
<div class="a" style="left:218px;top:673px;width:1px;height:19px;background:rgba(0,0,0,.16)"></div>
<div class="a" style="left:233px;top:653px;width:1px;height:20px;background:rgba(0,0,0,.07)"></div>
<div class="a" style="left:233px;top:673px;width:1px;height:19px;background:rgba(0,0,0,.16)"></div>
<div class="a" style="left:248px;top:653px;width:1px;height:20px;background:rgba(0,0,0,.07)"></div>
<div class="a" style="left:248px;top:673px;width:1px;height:19px;background:rgba(0,0,0,.16)"></div>
<div class="a" style="left:263px;top:653px;width:1px;height:20px;background:rgba(0,0,0,.07)"></div>
<div class="a" style="left:263px;top:673px;width:1px;height:19px;background:rgba(0,0,0,.16)"></div>
<div class="a" style="left:278px;top:653px;width:1px;height:20px;background:rgba(0,0,0,.07)"></div>
<div class="a" style="left:278px;top:673px;width:1px;height:19px;background:rgba(0,0,0,.16)"></div>
<div class="a" style="left:293px;top:653px;width:1px;height:20px;background:rgba(0,0,0,.07)"></div>
<div class="a" style="left:293px;top:673px;width:1px;height:19px;background:rgba(0,0,0,.16)"></div>
<div class="a" style="left:308px;top:653px;width:1px;height:20px;background:rgba(0,0,0,.07)"></div>
<div class="a" style="left:308px;top:673px;width:1px;height:19px;background:rgba(0,0,0,.16)"></div>
<div class="a" style="left:323px;top:653px;width:1px;height:20px;background:rgba(0,0,0,.07)"></div>
<div class="a" style="left:323px;top:673px;width:1px;height:19px;background:rgba(0,0,0,.16)"></div>
<div class="a" style="left:338px;top:653px;width:1px;height:20px;background:rgba(0,0,0,.07)"></div>
<div class="a" style="left:338px;top:673px;width:1px;height:19px;background:rgba(0,0,0,.16)"></div>
<div class="a" style="left:353px;top:653px;width:1px;height:20px;background:rgba(0,0,0,.07)"></div>
<div class="a" style="left:353px;top:673px;width:1px;height:19px;background:rgba(0,0,0,.16)"></div>
<div class="a" style="left:368px;top:653px;width:1px;height:20px;background:rgba(0,0,0,.07)"></div>
<div class="a" style="left:368px;top:673px;width:1px;height:19px;background:rgba(0,0,0,.16)"></div>
<div class="a" style="left:383px;top:653px;width:1px;height:20px;background:rgba(0,0,0,.07)"></div>
<div class="a" style="left:383px;top:673px;width:1px;height:19px;background:rgba(0,0,0,.16)"></div>
<div class="a" style="left:398px;top:653px;width:1px;height:20px;background:rgba(0,0,0,.07)"></div>
<div class="a" style="left:398px;top:673px;width:1px;height:19px;background:rgba(0,0,0,.16)"></div>
<div class="a" style="left:413px;top:653px;width:1px;height:20px;background:rgba(0,0,0,.07)"></div>
<div class="a" style="left:413px;top:673px;width:1px;height:19px;background:rgba(0,0,0,.16)"></div>
<div class="a" style="left:428px;top:653px;width:1px;height:20px;background:rgba(0,0,0,.07)"></div>
<div class="a" style="left:428px;top:673px;width:1px;height:19px;background:rgba(0,0,0,.16)"></div>
<div class="a" style="left:443px;top:653px;width:1px;height:20px;background:rgba(0,0,0,.07)"></div>
<div class="a" style="left:443px;top:673px;width:1px;height:19px;background:rgba(0,0,0,.16)"></div>
<div class="a" style="left:458px;top:653px;width:1px;height:20px;background:rgba(0,0,0,.07)"></div>
<div class="a" style="left:458px;top:673px;width:1px;height:19px;background:rgba(0,0,0,.16)"></div>
<div class="a" style="left:473px;top:653px;width:1px;height:20px;background:rgba(0,0,0,.07)"></div>
<div class="a" style="left:473px;top:673px;width:1px;height:19px;background:rgba(0,0,0,.16)"></div>
<div class="a" style="left:488px;top:653px;width:1px;height:20px;background:rgba(0,0,0,.07)"></div>
<div class="a" style="left:488px;top:673px;width:1px;height:19px;background:rgba(0,0,0,.16)"></div>
<div class="a" style="left:503px;top:653px;width:1px;height:20px;background:rgba(0,0,0,.07)"></div>
<div class="a" style="left:503px;top:673px;width:1px;height:19px;background:rgba(0,0,0,.16)"></div>
<div class="a" style="left:518px;top:653px;width:1px;height:20px;background:rgba(0,0,0,.07)"></div>
<div class="a" style="left:518px;top:673px;width:1px;height:19px;background:rgba(0,0,0,.16)"></div>
<div class="a" style="left:533px;top:653px;width:1px;height:20px;background:rgba(0,0,0,.07)"></div>
<div class="a" style="left:533px;top:673px;width:1px;height:19px;background:rgba(0,0,0,.16)"></div>
<div class="a" style="left:548px;top:653px;width:1px;height:20px;background:rgba(0,0,0,.07)"></div>
<div class="a" style="left:548px;top:673px;width:1px;height:19px;background:rgba(0,0,0,.16)"></div>
<div class="a" style="left:563px;top:653px;width:1px;height:20px;background:rgba(0,0,0,.07)"></div>
<div class="a" style="left:563px;top:673px;width:1px;height:19px;background:rgba(0,0,0,.16)"></div>
<div class="a" style="left:578px;top:653px;width:1px;height:20px;background:rgba(0,0,0,.07)"></div>
<div class="a" style="left:578px;top:673px;width:1px;height:19px;background:rgba(0,0,0,.16)"></div>
<div class="a" style="left:593px;top:653px;width:1px;height:20px;background:rgba(0,0,0,.07)"></div>
<div class="a" style="left:593px;top:673px;width:1px;height:19px;background:rgba(0,0,0,.16)"></div>
<div class="a" style="left:608px;top:653px;width:1px;height:20px;background:rgba(0,0,0,.07)"></div>
<div class="a" style="left:608px;top:673px;width:1px;height:19px;background:rgba(0,0,0,.16)"></div>
<div class="a" style="left:623px;top:653px;width:1px;height:20px;background:rgba(0,0,0,.07)"></div>
<div class="a" style="left:623px;top:673px;width:1px;height:19px;background:rgba(0,0,0,.16)"></div>
<div class="a" style="left:638px;top:653px;width:1px;height:20px;background:rgba(0,0,0,.07)"></div>
<div class="a" style="left:638px;top:673px;width:1px;height:19px;background:rgba(0,0,0,.16)"></div>
<div class="a" style="left:653px;top:653px;width:1px;height:20px;background:rgba(0,0,0,.07)"></div>
<div class="a" style="left:653px;top:673px;width:1px;height:19px;background:rgba(0,0,0,.16)"></div>
<div class="a" style="left:668px;top:653px;width:1px;height:20px;background:rgba(0,0,0,.07)"></div>
<div class="a" style="left:668px;top:673px;width:1px;height:19px;background:rgba(0,0,0,.16)"></div>
<div class="a" style="left:683px;top:653px;width:1px;height:20px;background:rgba(0,0,0,.07)"></div>
<div class="a" style="left:683px;top:673px;width:1px;height:19px;background:rgba(0,0,0,.16)"></div>
<div class="a" style="left:698px;top:653px;width:1px;height:20px;background:rgba(0,0,0,.07)"></div>
<div class="a" style="left:698px;top:673px;width:1px;height:19px;background:rgba(0,0,0,.16)"></div>
<div class="a" style="left:713px;top:653px;width:1px;height:20px;background:rgba(0,0,0,.07)"></div>
<div class="a" style="left:713px;top:673px;width:1px;height:19px;background:rgba(0,0,0,.16)"></div>
<div class="a" style="left:728px;top:653px;width:1px;height:20px;background:rgba(0,0,0,.07)"></div>
<div class="a" style="left:728px;top:673px;width:1px;height:19px;background:rgba(0,0,0,.16)"></div>
<div class="a" style="left:743px;top:653px;width:1px;height:20px;background:rgba(0,0,0,.07)"></div>
<div class="a" style="left:743px;top:673px;width:1px;height:19px;background:rgba(0,0,0,.16)"></div>
<div class="a" style="left:758px;top:653px;width:1px;height:20px;background:rgba(0,0,0,.07)"></div>
<div class="a" style="left:758px;top:673px;width:1px;height:19px;background:rgba(0,0,0,.16)"></div>
<div class="a" style="left:773px;top:653px;width:1px;height:20px;background:rgba(0,0,0,.07)"></div>
<div class="a" style="left:773px;top:673px;width:1px;height:19px;background:rgba(0,0,0,.16)"></div>
<div class="a" style="left:788px;top:653px;width:1px;height:20px;background:rgba(0,0,0,.07)"></div>
<div class="a" style="left:788px;top:673px;width:1px;height:19px;background:rgba(0,0,0,.16)"></div>
<div class="a" style="left:803px;top:653px;width:1px;height:20px;background:rgba(0,0,0,.07)"></div>
<div class="a" style="left:803px;top:673px;width:1px;height:19px;background:rgba(0,0,0,.16)"></div>
<div class="a" style="left:818px;top:653px;width:1px;height:20px;background:rgba(0,0,0,.07)"></div>
<div class="a" style="left:818px;top:673px;width:1px;height:19px;background:rgba(0,0,0,.16)"></div>
<div class="a" style="left:833px;top:653px;width:1px;height:20px;background:rgba(0,0,0,.07)"></div>
<div class="a" style="left:833px;top:673px;width:1px;height:19px;background:rgba(0,0,0,.16)"></div>
<div class="a" style="left:848px;top:653px;width:1px;height:20px;background:rgba(0,0,0,.07)"></div>
<div class="a" style="left:848px;top:673px;width:1px;height:19px;background:rgba(0,0,0,.16)"></div>
<div class="a" style="left:863px;top:653px;width:1px;height:20px;background:rgba(0,0,0,.07)"></div>
<div class="a" style="left:863px;top:673px;width:1px;height:19px;background:rgba(0,0,0,.16)"></div>
<div class="a" style="left:878px;top:653px;width:1px;height:20px;background:rgba(0,0,0,.07)"></div>
<div class="a" style="left:878px;top:673px;width:1px;height:19px;background:rgba(0,0,0,.16)"></div>
<div class="a" style="left:893px;top:653px;width:1px;height:20px;background:rgba(0,0,0,.07)"></div>
<div class="a" style="left:893px;top:673px;width:1px;height:19px;background:rgba(0,0,0,.16)"></div>
<div class="a" style="left:908px;top:653px;width:1px;height:20px;background:rgba(0,0,0,.07)"></div>
<div class="a" style="left:908px;top:673px;width:1px;height:19px;background:rgba(0,0,0,.16)"></div>
<div class="a" style="left:923px;top:653px;width:1px;height:20px;background:rgba(0,0,0,.07)"></div>
<div class="a" style="left:923px;top:673px;width:1px;height:19px;background:rgba(0,0,0,.16)"></div>
<div class="a" style="left:938px;top:653px;width:1px;height:20px;background:rgba(0,0,0,.07)"></div>
<div class="a" style="left:938px;top:673px;width:1px;height:19px;background:rgba(0,0,0,.16)"></div>
<div class="a" style="left:953px;top:653px;width:1px;height:20px;background:rgba(0,0,0,.07)"></div>
<div class="a" style="left:953px;top:673px;width:1px;height:19px;background:rgba(0,0,0,.16)"></div>
<div class="a" style="left:968px;top:653px;width:1px;height:20px;background:rgba(0,0,0,.07)"></div>
<div class="a" style="left:968px;top:673px;width:1px;height:19px;background:rgba(0,0,0,.16)"></div>
<div class="a" style="left:983px;top:653px;width:1px;height:20px;background:rgba(0,0,0,.07)"></div>
<div class="a" style="left:983px;top:673px;width:1px;height:19px;background:rgba(0,0,0,.16)"></div>
<div class="a" style="left:998px;top:653px;width:1px;height:20px;background:rgba(0,0,0,.07)"></div>
<div class="a" style="left:998px;top:673px;width:1px;height:19px;background:rgba(0,0,0,.16)"></div>
<div class="a" style="left:1013px;top:653px;width:1px;height:20px;background:rgba(0,0,0,.07)"></div>
<div class="a" style="left:1013px;top:673px;width:1px;height:19px;background:rgba(0,0,0,.16)"></div>
<div class="a" style="left:188px;top:681.5px;width:839px;height:1px;background:#4f7ca6"></div>
<div class="a" style="left:175px;top:673px;width:11px;height:19px;background:repeating-linear-gradient(45deg,#7d9dbc 0 2.6px,#3d5c7a 2.6px 5.2px)"></div>
<div class="a" style="left:179px;top:680.5px;width:3px;height:3px;background:#e8a33a;transform:rotate(45deg)"></div>
<div class="a" style="left:173.5px;top:653px;width:1.5px;height:39px;background:#e8a33a"></div>
<div class="a" style="left:185.8px;top:653px;width:1.5px;height:39px;background:#e8a33a"></div>
<div class="a" style="left:166px;top:661px;width:36px;height:46px;border:2px solid #e84325"></div>
<div class="a" style="left:0;top:762px;width:1028px;height:12px;background:#3f3f3f"></div>
<div class="a" style="left:1px;top:762px;width:10px;height:11px;border:1px solid #4d4d4d;background:#424242"></div>
<svg class="i" style="left:4px;top:765px" width="5" height="7"><path d="M4 0v6.5L0.5 3.25z" fill="#b0b0b0"/></svg>
<div class="a" style="left:12.5px;top:762px;width:563.5px;height:11px;border:1px solid #4a4a4a;border-radius:1px;background:#444"></div>
<div class="a" style="left:1015px;top:763px;width:11px;height:10px;border:1px solid #4d4d4d;background:#424242"></div>
<svg class="i" style="left:1018.5px;top:765px" width="5" height="7"><path d="M0.5 0v6.5L4 3.25z" fill="#b0b0b0"/></svg>
<div class="dots" style="left:1030px;top:673px;width:2.2px;height:16px"></div>
<!-- ONION SKINS -->
<svg class="i" style="left:1034px;top:585.5px" width="14" height="14"><circle cx="6.8" cy="6.8" r="6" fill="none" stroke="#cfcfcf" stroke-width="1"/><path d="M4.3 7.2h5.3v3.2H4.3z" fill="#dcdcdc"/><path d="M5.2 7.2V5.5a1.7 1.7 0 0 1 3.4 0" fill="none" stroke="#dcdcdc" stroke-width="1"/></svg>
<div class="t" style="left:1053px;top:587px;font-size:10.4px;color:#dcdcdc">Onion Skins</div>
<svg class="i" style="left:1247px;top:586px" width="13" height="13"><path d="M4.5 0.5h7.5v7.5H9 M0.5 4.5h7.5V12H0.5z M4.5 4.5V0.5" fill="none" stroke="#d4d4d4" stroke-width="1.1"/></svg>
<svg class="i" style="left:1267px;top:588px" width="10" height="10"><path d="M0.5 0.5l9 9M9.5 0.5l-9 9" stroke="#dcdcdc" stroke-width="1.2"/></svg>
<div class="a" style="left:1042px;top:607.5px;width:228px;height:51px;background:#353535"></div>
<div class="a" style="left:1044.70px;top:653.0px;width:5px;height:3px;background:#777777"></div>
<div class="t" style="left:1027.20px;width:40px;text-align:center;top:611.8px;font-size:8.8px;letter-spacing:-0.9px;color:#d4d4d4">-10</div>
<div class="a" style="left:1052.40px;top:608px;width:1px;height:50px;background:#393939"></div>
<div class="a" style="left:1055.10px;top:652.0px;width:5px;height:4px;background:#777777"></div>
<div class="t" style="left:1037.60px;width:40px;text-align:center;top:611.8px;font-size:8.8px;letter-spacing:-0.3px;color:#d4d4d4">-9</div>
<div class="a" style="left:1062.80px;top:608px;width:1px;height:50px;background:#393939"></div>
<div class="a" style="left:1065.50px;top:651.0px;width:5px;height:5px;background:#777777"></div>
<div class="t" style="left:1048.00px;width:40px;text-align:center;top:611.8px;font-size:8.8px;letter-spacing:-0.3px;color:#d4d4d4">-8</div>
<div class="a" style="left:1073.20px;top:608px;width:1px;height:50px;background:#393939"></div>
<div class="a" style="left:1075.90px;top:648.5px;width:5px;height:7.5px;background:#777777"></div>
<div class="t" style="left:1058.40px;width:40px;text-align:center;top:611.8px;font-size:8.8px;letter-spacing:-0.3px;color:#d4d4d4">-7</div>
<div class="a" style="left:1083.60px;top:608px;width:1px;height:50px;background:#393939"></div>
<div class="a" style="left:1086.30px;top:646.0px;width:5px;height:10px;background:#777777"></div>
<div class="t" style="left:1068.80px;width:40px;text-align:center;top:611.8px;font-size:8.8px;letter-spacing:-0.3px;color:#d4d4d4">-6</div>
<div class="a" style="left:1094.00px;top:608px;width:1px;height:50px;background:#393939"></div>
<div class="a" style="left:1096.70px;top:644.0px;width:5px;height:12px;background:#777777"></div>
<div class="t" style="left:1079.20px;width:40px;text-align:center;top:611.8px;font-size:8.8px;letter-spacing:-0.3px;color:#d4d4d4">-5</div>
<div class="a" style="left:1104.40px;top:608px;width:1px;height:50px;background:#393939"></div>
<div class="a" style="left:1107.10px;top:642.0px;width:5px;height:14px;background:#777777"></div>
<div class="t" style="left:1089.60px;width:40px;text-align:center;top:611.8px;font-size:8.8px;letter-spacing:-0.3px;color:#d4d4d4">-4</div>
<div class="a" style="left:1114.80px;top:608px;width:1px;height:50px;background:#393939"></div>
<div class="a" style="left:1117.50px;top:639.0px;width:5px;height:17px;background:#777777"></div>
<div class="t" style="left:1100.00px;width:40px;text-align:center;top:611.8px;font-size:8.8px;letter-spacing:-0.3px;color:#d4d4d4">-3</div>
<div class="a" style="left:1125.20px;top:608px;width:1px;height:50px;background:#393939"></div>
<div class="a" style="left:1127.90px;top:637.0px;width:5px;height:19px;background:#52759a"></div>
<div class="a" style="left:1127.40px;top:610px;width:6px;height:11px;background:#4a6888"></div>
<div class="t" style="left:1110.40px;width:40px;text-align:center;top:611.8px;font-size:8.8px;letter-spacing:-0.3px;color:#d4d4d4">-2</div>
<div class="a" style="left:1135.60px;top:608px;width:1px;height:50px;background:#393939"></div>
<div class="a" style="left:1138.30px;top:637.0px;width:5px;height:19px;background:#52759a"></div>
<div class="a" style="left:1137.80px;top:610px;width:6px;height:11px;background:#4a6888"></div>
<div class="t" style="left:1120.80px;width:40px;text-align:center;top:611.8px;font-size:8.8px;letter-spacing:-0.3px;color:#d4d4d4">-1</div>
<div class="a" style="left:1146.00px;top:608px;width:1px;height:50px;background:#393939"></div>
<div class="a" style="left:1149.00px;top:636.0px;width:15px;height:20px;background:#52759a"></div>
<div class="a" style="left:1149.00px;top:610px;width:15px;height:11px;background:#4a6888"></div>
<div class="t" style="left:1136.50px;width:40px;text-align:center;top:611.8px;font-size:8.8px;letter-spacing:-0.3px;color:#d4d4d4">0</div>
<div class="a" style="left:1167.00px;top:608px;width:1px;height:50px;background:#393939"></div>
<div class="a" style="left:1169.30px;top:637.0px;width:5px;height:19px;background:#52759a"></div>
<div class="a" style="left:1168.80px;top:610px;width:6px;height:11px;background:#4a6888"></div>
<div class="t" style="left:1151.80px;width:40px;text-align:center;top:611.8px;font-size:8.8px;letter-spacing:-0.3px;color:#d4d4d4">1</div>
<div class="a" style="left:1177.40px;top:608px;width:1px;height:50px;background:#393939"></div>
<div class="a" style="left:1179.70px;top:637.0px;width:5px;height:19px;background:#52759a"></div>
<div class="a" style="left:1179.20px;top:610px;width:6px;height:11px;background:#4a6888"></div>
<div class="t" style="left:1162.20px;width:40px;text-align:center;top:611.8px;font-size:8.8px;letter-spacing:-0.3px;color:#d4d4d4">2</div>
<div class="a" style="left:1187.80px;top:608px;width:1px;height:50px;background:#393939"></div>
<div class="a" style="left:1190.10px;top:639.0px;width:5px;height:17px;background:#777777"></div>
<div class="t" style="left:1172.60px;width:40px;text-align:center;top:611.8px;font-size:8.8px;letter-spacing:-0.3px;color:#d4d4d4">3</div>
<div class="a" style="left:1198.20px;top:608px;width:1px;height:50px;background:#393939"></div>
<div class="a" style="left:1200.50px;top:642.0px;width:5px;height:14px;background:#777777"></div>
<div class="t" style="left:1183.00px;width:40px;text-align:center;top:611.8px;font-size:8.8px;letter-spacing:-0.3px;color:#d4d4d4">4</div>
<div class="a" style="left:1208.60px;top:608px;width:1px;height:50px;background:#393939"></div>
<div class="a" style="left:1210.90px;top:644.0px;width:5px;height:12px;background:#777777"></div>
<div class="t" style="left:1193.40px;width:40px;text-align:center;top:611.8px;font-size:8.8px;letter-spacing:-0.3px;color:#d4d4d4">5</div>
<div class="a" style="left:1219.00px;top:608px;width:1px;height:50px;background:#393939"></div>
<div class="a" style="left:1221.30px;top:646.0px;width:5px;height:10px;background:#777777"></div>
<div class="t" style="left:1203.80px;width:40px;text-align:center;top:611.8px;font-size:8.8px;letter-spacing:-0.3px;color:#d4d4d4">6</div>
<div class="a" style="left:1229.40px;top:608px;width:1px;height:50px;background:#393939"></div>
<div class="a" style="left:1231.70px;top:648.5px;width:5px;height:7.5px;background:#777777"></div>
<div class="t" style="left:1214.20px;width:40px;text-align:center;top:611.8px;font-size:8.8px;letter-spacing:-0.3px;color:#d4d4d4">7</div>
<div class="a" style="left:1239.80px;top:608px;width:1px;height:50px;background:#393939"></div>
<div class="a" style="left:1242.10px;top:651.0px;width:5px;height:5px;background:#777777"></div>
<div class="t" style="left:1224.60px;width:40px;text-align:center;top:611.8px;font-size:8.8px;letter-spacing:-0.3px;color:#d4d4d4">8</div>
<div class="a" style="left:1250.20px;top:608px;width:1px;height:50px;background:#393939"></div>
<div class="a" style="left:1252.50px;top:652.0px;width:5px;height:4px;background:#777777"></div>
<div class="t" style="left:1235.00px;width:40px;text-align:center;top:611.8px;font-size:8.8px;letter-spacing:-0.3px;color:#d4d4d4">9</div>
<div class="a" style="left:1260.60px;top:608px;width:1px;height:50px;background:#393939"></div>
<div class="a" style="left:1262.90px;top:653.0px;width:5px;height:3px;background:#777777"></div>
<div class="t" style="left:1245.40px;width:40px;text-align:center;top:611.8px;font-size:8.8px;letter-spacing:-0.9px;color:#d4d4d4">10</div>
<div class="a" style="left:1042.5px;top:665.5px;width:11.5px;height:11px;background:#3a3a3a;border-radius:2px"></div>
<div class="t" style="left:1057.5px;top:666px;font-size:10.4px;color:#dcdcdc">Filter Onion Skins by Frame Color</div>
<div class="a" style="left:1042px;top:680.5px;width:228px;height:10.5px;border:1px solid #4e4e4e;border-radius:2px;background:#444"></div>
<div class="a" style="left:1042px;top:705px;width:203px;height:1px;background:#3c3c3c"></div>
<div class="a" style="left:1252px;top:697.5px;width:18px;height:17.5px;background:#3b3b3b;border:1px solid #343434;border-radius:2px"></div>
<svg class="i" style="left:1255px;top:702px" width="12" height="8"><path d="M0.8 0.8L6 6l5.2-5.2" fill="none" stroke="#e8e8e8" stroke-width="1.4"/></svg>
<div class="a" style="left:1042px;top:722.5px;width:228px;height:16.5px;background:#383838;border-radius:2px"></div>
<div class="a" style="left:1042px;top:722.5px;width:162.5px;height:16.5px;background:#52759a;border-radius:2px 0 0 2px"></div>
<div class="a" style="left:1259.5px;top:722.5px;width:10.5px;height:16.5px;background:#404040;border:1px solid #4a4a4a;border-radius:2px"></div>
<svg class="i" style="left:1261.5px;top:724px" width="7" height="13"><path d="M0.3 4h6L3.3 1.2z" fill="#9a9a9a"/><path d="M0.3 8.8h6L3.3 11.6z" fill="#9a9a9a"/></svg>
<div class="t" style="left:1120px;width:60px;text-align:center;top:726px;font-size:10.4px;color:#e6e9ee">Tint: 75,00%</div>
<div class="a" style="left:1042.5px;top:747px;width:39px;height:17px;background:#3c3c3c;border:1px solid #343434;border-radius:2px"></div>
<div class="a" style="left:1045px;top:749.5px;width:34px;height:12px;background:#f03a28"></div>
<div class="t" style="left:1086.5px;top:750.5px;font-size:10.4px;color:#dcdcdc">Previous frames</div>
<div class="t" style="left:1168.5px;top:750.5px;font-size:10.4px;color:#dcdcdc">Next frames</div>
<div class="a" style="left:1231.5px;top:747px;width:39px;height:17px;background:#3c3c3c;border:1px solid #343434;border-radius:2px"></div>
<div class="a" style="left:1234px;top:749.5px;width:34px;height:12px;background:#74f04a"></div>
<div class="a" style="left:0;top:775px;width:1280px;height:25px;background:#474747"></div>
<div class="a" style="left:0;top:792px;width:8px;height:8px;background:radial-gradient(circle at 8px 0,#474747 7.5px,#1c4a7e 8.5px)"></div>
<div class="a" style="left:1272px;top:792px;width:8px;height:8px;background:radial-gradient(circle at 0 0,#474747 7.5px,#3a3a78 8.5px)"></div>
<svg class="i" style="left:5px;top:781px" width="14" height="14"><rect x="0.5" y="0.5" width="12.5" height="12.5" rx="1" fill="none" stroke="#9a9a9a" stroke-width="1"/><circle cx="6.75" cy="6.75" r="3.5" fill="none" stroke="#9a9a9a" stroke-width="1" stroke-dasharray="1.2 1"/></svg>
<div class="t" style="left:262.5px;top:782px;font-size:11.2px;color:#d4d4d4">RGB/Alpha (8-bit integer/channel)&nbsp;&nbsp;sRGB IEC61966-2.1</div>
<div class="a" style="left:842.5px;top:777.5px;width:138px;height:20px;background:#424242;border:1px solid #3a3a3a;border-radius:2px"></div>
<div class="a" style="left:843.5px;top:778.5px;width:19px;height:18px;background:#52759a"></div>
<div class="t" style="left:845px;top:781.5px;font-size:11.5px;color:#e0e0e0">3 840 <u>x</u> 2 160 (605,6 MiB)</div>
<svg class="i" style="left:988.5px;top:779px" width="19" height="19"><circle cx="9.25" cy="9.25" r="9" fill="#2a2a2a"/><path d="M2.5 9.25h14" stroke="#e0e0e0" stroke-width="1.2"/><circle cx="9.25" cy="9.25" r="1.6" fill="#e0e0e0"/><circle cx="15.5" cy="9.25" r="1.3" fill="#e0e0e0"/></svg>
<div class="t" style="left:1036.5px;top:782px;font-size:11.2px;color:#d4d4d4">0,00˚</div>
<div class="t" style="left:1141.5px;top:781.5px;font-size:11.5px;color:#d4d4d4">49,0%</div>
<div class="a" style="left:1190px;top:786.5px;width:68px;height:2px;background:#353535;border-radius:1px"></div>
<div class="a" style="left:1190px;top:786.5px;width:14px;height:2px;background:#6a8fb5"></div>
<div class="a" style="left:1203px;top:782px;width:10px;height:11px;background:#585858;border:1px solid #333;border-radius:2px"></div>
<div class="a" style="left:1260px;top:778px;width:18px;height:18px;background:#3d3d3d;border:1px solid #353535;border-radius:3px"></div>
<svg class="i" style="left:1264px;top:780px" width="11" height="14"><rect x="0.7" y="0.7" width="9.6" height="12.6" fill="#353535" stroke="#d0d0d0" stroke-width="1.2"/><rect x="3" y="4.3" width="5" height="5" fill="#e0e0e0"/><circle cx="5.5" cy="6.8" r="0.9" fill="#333"/></svg>
</body></html>
